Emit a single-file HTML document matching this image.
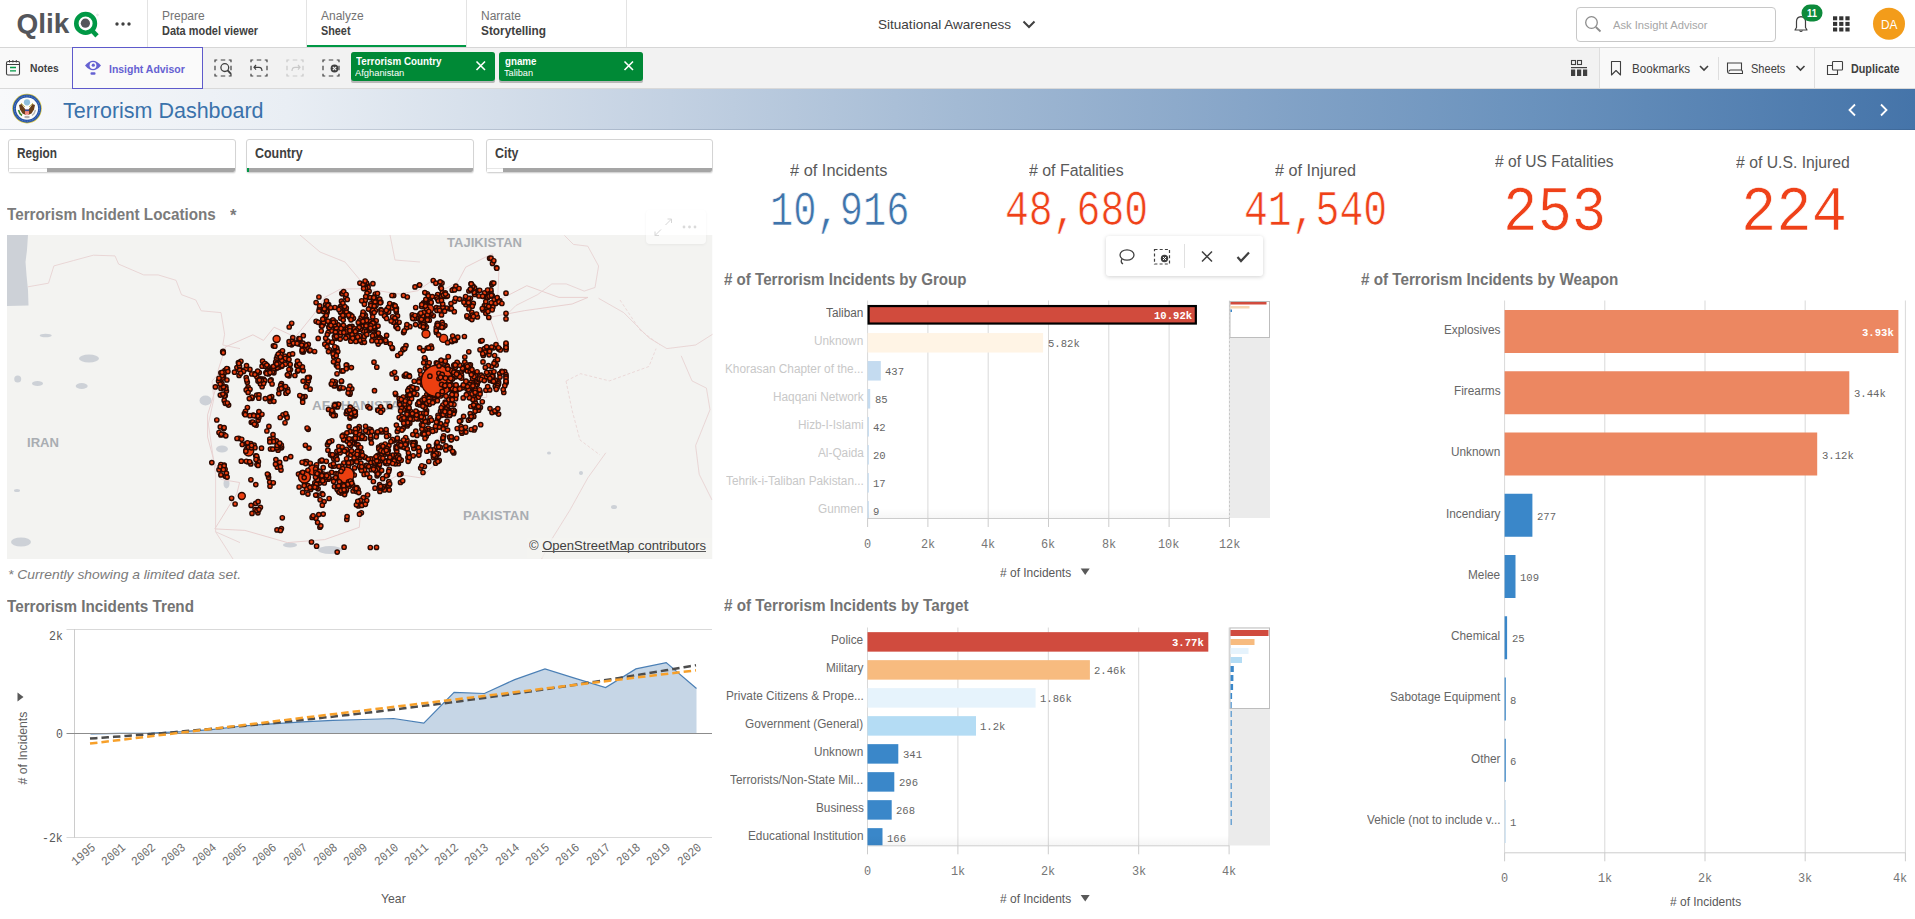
<!DOCTYPE html>
<html><head><meta charset="utf-8"><title>Terrorism Dashboard</title>
<style>
*{margin:0;padding:0;box-sizing:border-box}
html,body{width:1915px;height:919px;overflow:hidden;background:#fff;font-family:"Liberation Sans",sans-serif}
.a{position:absolute}
.t{position:absolute;white-space:pre}
svg{position:absolute;overflow:visible}
</style></head>
<body>
<div class="a" style="left:0;top:0;width:1915px;height:47px;background:#fff"></div>
<div class="a" style="left:0;top:47px;width:1915px;height:1px;background:#d6d6d6"></div>
<div class="t" style="left:16.50px;top:8.00px;font:normal bold 28px 'Liberation Sans', sans-serif;line-height:32.20px;color:#54565b;">Qlik</div>
<svg style="left:0;top:0" width="140" height="47">
<circle cx="85.6" cy="23.4" r="9.3" fill="none" stroke="#009845" stroke-width="4.6"/>
<circle cx="85.4" cy="23.2" r="4.6" fill="#54565b"/>
<path d="M91.5 30 L97 35.8" stroke="#009845" stroke-width="4.6" stroke-linecap="butt"/>
<circle cx="97.5" cy="15" r="0.9" fill="none" stroke="#bbb" stroke-width="0.4"/>
<circle cx="117" cy="24" r="1.7" fill="#404040"/><circle cx="123" cy="24" r="1.7" fill="#404040"/><circle cx="129" cy="24" r="1.7" fill="#404040"/>
</svg>
<div class="a" style="left:147px;top:0;width:1px;height:47px;background:#e3e3e3"></div>
<div class="a" style="left:306px;top:0;width:1px;height:47px;background:#e3e3e3"></div>
<div class="a" style="left:466px;top:0;width:1px;height:47px;background:#e3e3e3"></div>
<div class="a" style="left:626px;top:0;width:1px;height:47px;background:#e3e3e3"></div>
<div class="a" style="left:307px;top:45px;width:159px;height:2px;background:#009845"></div>
<div class="t" style="left:162.00px;top:9.60px;font:normal normal 12px 'Liberation Sans', sans-serif;line-height:13.80px;color:#737373;">Prepare</div>
<div class="t" style="left:162.00px;top:24.00px;font:normal bold 13px 'Liberation Sans', sans-serif;line-height:14.95px;color:#404040;transform:scaleX(0.8410);transform-origin:0 0;">Data model viewer</div>
<div class="t" style="left:321.00px;top:9.60px;font:normal normal 12px 'Liberation Sans', sans-serif;line-height:13.80px;color:#737373;">Analyze</div>
<div class="t" style="left:321.00px;top:24.00px;font:normal bold 13px 'Liberation Sans', sans-serif;line-height:14.95px;color:#404040;transform:scaleX(0.8332);transform-origin:0 0;">Sheet</div>
<div class="t" style="left:481.00px;top:9.60px;font:normal normal 12px 'Liberation Sans', sans-serif;line-height:13.80px;color:#737373;">Narrate</div>
<div class="t" style="left:481.00px;top:24.00px;font:normal bold 13px 'Liberation Sans', sans-serif;line-height:14.95px;color:#404040;transform:scaleX(0.9089);transform-origin:0 0;">Storytelling</div>
<div class="t" style="left:877.50px;top:16.80px;font:normal normal 13.4px 'Liberation Sans', sans-serif;line-height:15.41px;color:#404040;transform:scaleX(1.0113);transform-origin:0 0;">Situational Awareness</div>
<svg style="left:0;top:0" width="1915" height="47"><path d="M1023.5 21.5 L1029 27 L1034.5 21.5" fill="none" stroke="#404040" stroke-width="2"/></svg>
<div class="a" style="left:1576px;top:7px;width:200px;height:35px;border:1px solid #c8c8c8;border-radius:4px;background:#fff"></div>
<svg style="left:0;top:0" width="1915" height="47">
<circle cx="1591.5" cy="22.5" r="5.8" fill="none" stroke="#8c8c8c" stroke-width="1.3"/>
<path d="M1595.8 27 L1600.5 31.5" stroke="#8c8c8c" stroke-width="1.8"/>
</svg>
<div class="t" style="left:1613.00px;top:18.80px;font:normal normal 11.8px 'Liberation Sans', sans-serif;line-height:13.57px;color:#a6a6a6;transform:scaleX(0.9481);transform-origin:0 0;">Ask Insight Advisor</div>
<svg style="left:0;top:0" width="1915" height="47">
<path d="M1795 30 L1807 30 L1805.5 27.5 L1805.5 21.5 Q1805.5 17 1801 16.6 Q1796.5 17 1796.5 21.5 L1796.5 27.5 Z" fill="none" stroke="#404040" stroke-width="1.2" stroke-linejoin="round"/>
<path d="M1799.5 30.5 Q1801 32.5 1802.5 30.5" fill="none" stroke="#404040" stroke-width="1.2"/>
<rect x="1801.5" y="4.6" width="21" height="17" rx="8.5" fill="#0d8a3b"/>
</svg>
<div class="t" style="left:1807.00px;top:7.30px;font:normal bold 11px 'Liberation Sans', sans-serif;line-height:12.65px;color:#fff;transform:scaleX(0.8591);transform-origin:0 0;">11</div>
<svg style="left:0;top:0" width="1915" height="47"><rect x="1833.0" y="16.3" width="4.2" height="4" fill="#333"/><rect x="1839.2" y="16.3" width="4.2" height="4" fill="#333"/><rect x="1845.4" y="16.3" width="4.2" height="4" fill="#333"/><rect x="1833.0" y="21.9" width="4.2" height="4" fill="#333"/><rect x="1839.2" y="21.9" width="4.2" height="4" fill="#333"/><rect x="1845.4" y="21.9" width="4.2" height="4" fill="#333"/><rect x="1833.0" y="27.5" width="4.2" height="4" fill="#333"/><rect x="1839.2" y="27.5" width="4.2" height="4" fill="#333"/><rect x="1845.4" y="27.5" width="4.2" height="4" fill="#333"/><circle cx="1889" cy="23.8" r="16" fill="#f39c1a"/></svg>
<div class="t" style="left:1880.75px;top:17.60px;font:normal normal 13px 'Liberation Sans', sans-serif;line-height:14.95px;color:#fff;transform:scaleX(0.9135);transform-origin:0 0;">DA</div>
<div class="a" style="left:0;top:48px;width:1915px;height:40px;background:#f2f2f2"></div>
<div class="a" style="left:1600px;top:48px;width:315px;height:40px;background:#f9f9f9"></div>
<div class="a" style="left:0;top:88px;width:1915px;height:1px;background:#d9d9d9"></div>
<div class="a" style="left:1599px;top:48px;width:1px;height:40px;background:#dedede"></div>
<div class="a" style="left:1814px;top:48px;width:1px;height:40px;background:#dedede"></div>
<div class="a" style="left:1718px;top:57px;width:1px;height:23px;background:#dedede"></div>
<div class="a" style="left:0;top:48px;width:72px;height:40px;background:#f9f9f9"></div>
<svg style="left:0;top:0" width="400" height="90">
<rect x="6.5" y="61.5" width="13" height="13.5" rx="1.5" fill="none" stroke="#404040" stroke-width="1.1"/>
<path d="M6.5 64.5 H19.5" stroke="#404040" stroke-width="1"/>
<path d="M9.5 60 V62.5 M12.9 60 V62.5 M16.3 60 V62.5" stroke="#404040" stroke-width="1"/>
<path d="M10 67.5 H16 M10 70.8 H16" stroke="#009845" stroke-width="1.3"/>
</svg>
<div class="t" style="left:29.80px;top:61.90px;font:normal bold 11.4px 'Liberation Sans', sans-serif;line-height:13.11px;color:#404040;transform:scaleX(0.9066);transform-origin:0 0;">Notes</div>
<div class="a" style="left:71.5px;top:47px;width:131px;height:42px;border:1.5px solid #5e5acb;background:#fafafa"></div>
<svg style="left:0;top:0" width="400" height="90">
<path d="M85 65.5 Q93 56 101 65.5 Q93 75 85 65.5 Z" fill="#6561d2"/>
<circle cx="93" cy="65.5" r="3.4" fill="#fafafa"/><circle cx="93.3" cy="65.2" r="1.6" fill="#6561d2"/>
<rect x="90.5" y="72.3" width="5" height="2.5" rx="1" fill="#6561d2"/>
</svg>
<div class="t" style="left:109.10px;top:62.50px;font:normal bold 11.5px 'Liberation Sans', sans-serif;line-height:13.22px;color:#6561d2;transform:scaleX(0.9102);transform-origin:0 0;">Insight Advisor</div>
<svg style="left:0;top:0" width="400" height="90">
<g fill="none" stroke="#404040" stroke-width="1.2" stroke-dasharray="4.5 3.5" stroke-dashoffset="2.25">
<rect x="215" y="60" width="16" height="16"/>
<rect x="251" y="60" width="16" height="16"/>
<rect x="287" y="60" width="16" height="16" stroke="#c9c9c9"/>
<rect x="323" y="60" width="16" height="16"/>
</g>
<circle cx="224.8" cy="67.6" r="3.9" fill="none" stroke="#404040" stroke-width="1.3"/><path d="M227.6 70.4 L231 73.8" stroke="#404040" stroke-width="1.9"/>
<path d="M256 65 L254 67.3 L256 69.6 M254.2 67.3 H259 Q262 67.3 262 71" fill="none" stroke="#404040" stroke-width="1.2"/>
<path d="M298 65 L300 67.3 L298 69.6 M299.8 67.3 H295 Q292 67.3 292 71" fill="none" stroke="#c9c9c9" stroke-width="1.2"/>
<circle cx="334.5" cy="68.5" r="3.9" fill="#404040"/><path d="M332.8 66.8 L336.2 70.2 M336.2 66.8 L332.8 70.2" stroke="#f2f2f2" stroke-width="1.1"/>
</svg>
<div class="a" style="left:351px;top:52px;width:144px;height:31px;border-radius:3px 3px 2px 2px;background:#b8b8b8"></div>
<div class="a" style="left:351px;top:52px;width:144px;height:29px;border-radius:3px;background:#008936"></div>
<svg style="left:0;top:0" width="700" height="90"><path d="M476.5 61.5 L485 70 M485 61.5 L476.5 70" stroke="#fff" stroke-width="1.6"/></svg>
<div class="a" style="left:499px;top:52px;width:144px;height:31px;border-radius:3px 3px 2px 2px;background:#b8b8b8"></div>
<div class="a" style="left:499px;top:52px;width:144px;height:29px;border-radius:3px;background:#008936"></div>
<svg style="left:0;top:0" width="700" height="90"><path d="M624.5 61.5 L633 70 M633 61.5 L624.5 70" stroke="#fff" stroke-width="1.6"/></svg>
<div class="t" style="left:356.30px;top:56.10px;font:normal bold 10px 'Liberation Sans', sans-serif;line-height:11.50px;color:#fff;transform:scaleX(0.9832);transform-origin:0 0;">Terrorism Country</div>
<div class="t" style="left:355.40px;top:67.60px;font:normal normal 9.2px 'Liberation Sans', sans-serif;line-height:10.58px;color:#fff;transform:scaleX(1.0158);transform-origin:0 0;">Afghanistan</div>
<div class="t" style="left:504.50px;top:56.10px;font:normal bold 10px 'Liberation Sans', sans-serif;line-height:11.50px;color:#fff;transform:scaleX(0.9772);transform-origin:0 0;">gname</div>
<div class="t" style="left:503.60px;top:67.60px;font:normal normal 9.2px 'Liberation Sans', sans-serif;line-height:10.58px;color:#fff;transform:scaleX(0.9957);transform-origin:0 0;">Taliban</div>
<svg style="left:0;top:0" width="1915" height="90">
<g fill="none" stroke="#404040" stroke-width="1.1">
<rect x="1571.5" y="60.5" width="4" height="4"/><rect x="1577.5" y="60.5" width="4" height="4"/>
</g>
<rect x="1571" y="67" width="16" height="1.2" fill="#404040"/>
<rect x="1571" y="69.5" width="4.2" height="6.5" fill="#404040"/><rect x="1577" y="69.5" width="4.2" height="6.5" fill="#404040"/><rect x="1583" y="69.5" width="4.2" height="6.5" fill="#404040"/>
<path d="M1611.5 61.5 H1620.5 V75 L1616 70.5 L1611.5 75 Z" fill="none" stroke="#404040" stroke-width="1.1" stroke-linejoin="round"/>
<path d="M1700 66 L1704 70 L1708 66" fill="none" stroke="#404040" stroke-width="1.6"/>
<path d="M1727.5 71 V63 H1741.5 V70 M1727.5 71 Q1727.5 73.5 1730 73.5 H1742.5 Q1743 71 1741.5 70 H1730.5 Q1729 70 1729 71.5" fill="none" stroke="#404040" stroke-width="1.1"/>
<path d="M1796.5 66 L1800.5 70 L1804.5 66" fill="none" stroke="#404040" stroke-width="1.6"/>
<rect x="1832.5" y="61.5" width="10" height="8.5" rx="0.8" fill="none" stroke="#404040" stroke-width="1.1"/>
<path d="M1832.5 65.5 H1827.5 V74.5 H1837.5 V70" fill="none" stroke="#404040" stroke-width="1.1"/>
</svg>
<div class="t" style="left:1632.00px;top:62.20px;font:normal normal 12.8px 'Liberation Sans', sans-serif;line-height:14.72px;color:#404040;transform:scaleX(0.9060);transform-origin:0 0;">Bookmarks</div>
<div class="t" style="left:1751.40px;top:62.20px;font:normal normal 12.8px 'Liberation Sans', sans-serif;line-height:14.72px;color:#404040;transform:scaleX(0.8634);transform-origin:0 0;">Sheets</div>
<div class="t" style="left:1851.40px;top:62.20px;font:normal bold 12.8px 'Liberation Sans', sans-serif;line-height:14.72px;color:#404040;transform:scaleX(0.8419);transform-origin:0 0;">Duplicate</div>
<div class="a" style="left:0;top:89px;width:1915px;height:41px;background:linear-gradient(90deg,#f8f9fb 0%,#e9eef4 15%,#c3d1e2 35%,#a3bad4 50%,#86a5c8 65%,#6a92bd 80%,#4574a9 100%)"></div>
<div class="a" style="left:0;top:129px;width:1915px;height:1px;background:rgba(30,50,80,0.16)"></div>
<svg style="left:0;top:0" width="100" height="135">
<circle cx="27" cy="108.6" r="14.8" fill="#d8c648"/>
<circle cx="27" cy="108.6" r="14.1" fill="#2352a6"/>
<circle cx="27" cy="108.6" r="12.6" fill="none" stroke="#8aa4d6" stroke-width="0.7" stroke-dasharray="0.9 0.8"/>
<circle cx="27" cy="108.6" r="11.1" fill="#fdfdfb"/>
<circle cx="27" cy="102.3" r="3.1" fill="#8fc0dc"/>
<path d="M25.8 110 L21.5 104 L19 105 L20 109.5 L22.5 113.5 L25.8 115 Z" fill="#6a3f1a"/>
<path d="M28.2 110 L32.5 104 L35 105 L34 109.5 L31.5 113.5 L28.2 115 Z" fill="#6a3f1a"/>
<path d="M21 103 L25 107 M33 103 L29 107" stroke="#c9c060" stroke-width="1"/>
<circle cx="27" cy="107.5" r="1.3" fill="#fff"/>
<rect x="25" y="109.5" width="4" height="5.2" fill="#f08a80"/>
<rect x="25" y="109.5" width="4" height="1.6" fill="#2d4f9c"/>
<path d="M18.5 110 Q19.5 114 22 115.5" fill="none" stroke="#3f8a2c" stroke-width="1.6"/>
<path d="M35.5 110 Q34.5 114 32 115.5" fill="none" stroke="#b5b5b5" stroke-width="1.4"/>
<ellipse cx="27" cy="117" rx="2.8" ry="1.3" fill="#b0b0b0"/>
</svg>
<div class="t" style="left:62.70px;top:97.70px;font:normal normal 22px 'Liberation Sans', sans-serif;line-height:25.30px;color:#3a72ab;transform:scaleX(0.9761);transform-origin:0 0;">Terrorism Dashboard</div>
<svg style="left:0;top:0" width="1915" height="135">
<path d="M1855 104.5 L1849.5 110 L1855 115.5" fill="none" stroke="#fff" stroke-width="1.8"/>
<path d="M1881 104.5 L1886.5 110 L1881 115.5" fill="none" stroke="#fff" stroke-width="1.8"/>
</svg>
<div class="a" style="left:7.5px;top:139px;width:228.0px;height:34px;border:1px solid #d4d4d4;border-radius:3px;background:#fff;box-shadow:0 1px 1px rgba(0,0,0,0.06)"></div>
<div class="a" style="left:8.5px;top:168px;width:226.0px;height:4px;background:#a5a5a5;border-radius:0 0 2px 2px"></div>
<div class="a" style="left:8.5px;top:168px;width:38px;height:4px;background:#fff;border-top:1px solid #e6e6e6"></div>
<div class="t" style="left:16.50px;top:146.00px;font:normal bold 13.8px 'Liberation Sans', sans-serif;line-height:15.87px;color:#404040;transform:scaleX(0.8553);transform-origin:0 0;">Region</div>
<div class="a" style="left:246px;top:139px;width:228px;height:34px;border:1px solid #d4d4d4;border-radius:3px;background:#fff;box-shadow:0 1px 1px rgba(0,0,0,0.06)"></div>
<div class="a" style="left:247px;top:168px;width:226px;height:4px;background:#a5a5a5;border-radius:0 0 2px 2px"></div>
<div class="a" style="left:247px;top:168px;width:2px;height:4px;background:#009845"></div>
<div class="t" style="left:255.00px;top:146.00px;font:normal bold 13.8px 'Liberation Sans', sans-serif;line-height:15.87px;color:#404040;transform:scaleX(0.9019);transform-origin:0 0;">Country</div>
<div class="a" style="left:485.5px;top:139px;width:227.0px;height:34px;border:1px solid #d4d4d4;border-radius:3px;background:#fff;box-shadow:0 1px 1px rgba(0,0,0,0.06)"></div>
<div class="a" style="left:486.5px;top:168px;width:225.0px;height:4px;background:#a5a5a5;border-radius:0 0 2px 2px"></div>
<div class="a" style="left:486.5px;top:168px;width:16px;height:4px;background:#fff;border-top:1px solid #e6e6e6"></div>
<div class="t" style="left:494.50px;top:146.00px;font:normal bold 13.8px 'Liberation Sans', sans-serif;line-height:15.87px;color:#404040;transform:scaleX(0.8973);transform-origin:0 0;">City</div>
<div class="t" style="left:7.20px;top:204.80px;font:normal bold 17px 'Liberation Sans', sans-serif;line-height:19.55px;color:#7b7b7b;transform:scaleX(0.8961);transform-origin:0 0;">Terrorism Incident Locations</div>
<div class="t" style="left:230.40px;top:206.00px;font:normal bold 17px 'Liberation Sans', sans-serif;line-height:19.55px;color:#7b7b7b;transform:scaleX(0.9811);transform-origin:0 0;">*</div>
<div class="t" style="left:7.50px;top:568.40px;font:italic normal 13px 'Liberation Sans', sans-serif;line-height:14.95px;color:#7b7b7b;transform:scaleX(1.0677);transform-origin:0 0;">* Currently showing a limited data set.</div>
<div class="t" style="left:7.00px;top:596.70px;font:normal bold 16.5px 'Liberation Sans', sans-serif;line-height:18.97px;color:#737373;transform:scaleX(0.9242);transform-origin:0 0;">Terrorism Incidents Trend</div>
<div class="t" style="left:790.40px;top:161.00px;font:normal normal 16.7px 'Liberation Sans', sans-serif;line-height:19.20px;color:#595959;transform:scaleX(0.9812);transform-origin:0 0;"># of Incidents</div>
<div class="t" style="left:769.92px;top:185.00px;font:normal normal 48.484848484848484px 'Liberation Mono', monospace;line-height:55.76px;color:#3f74ab;transform:scaleX(0.7985);transform-origin:0 0;-webkit-text-stroke:0.7px #fff;">10,916</div>
<div class="t" style="left:1029.20px;top:161.10px;font:normal normal 16.7px 'Liberation Sans', sans-serif;line-height:19.20px;color:#595959;transform:scaleX(0.9531);transform-origin:0 0;"># of Fatalities</div>
<div class="t" style="left:1005.40px;top:184.40px;font:normal normal 49.39393939393939px 'Liberation Mono', monospace;line-height:56.80px;color:#ef4119;transform:scaleX(0.8055);transform-origin:0 0;-webkit-text-stroke:0.7px #fff;">48,680</div>
<div class="t" style="left:1275.05px;top:161.10px;font:normal normal 16.7px 'Liberation Sans', sans-serif;line-height:19.20px;color:#595959;transform:scaleX(0.9689);transform-origin:0 0;"># of Injured</div>
<div class="t" style="left:1244.40px;top:184.40px;font:normal normal 49.39393939393939px 'Liberation Mono', monospace;line-height:56.80px;color:#ef4119;transform:scaleX(0.8055);transform-origin:0 0;-webkit-text-stroke:0.7px #fff;">41,540</div>
<div class="t" style="left:1494.70px;top:151.80px;font:normal normal 16.7px 'Liberation Sans', sans-serif;line-height:19.20px;color:#595959;transform:scaleX(0.9333);transform-origin:0 0;"># of US Fatalities</div>
<div class="t" style="left:1502.84px;top:176.90px;font:normal normal 63.63636363636363px 'Liberation Mono', monospace;line-height:73.18px;color:#ef4119;transform:scaleX(0.9019);transform-origin:0 0;-webkit-text-stroke:0.7px #fff;">253</div>
<div class="t" style="left:1736.10px;top:152.60px;font:normal normal 16.7px 'Liberation Sans', sans-serif;line-height:19.20px;color:#595959;transform:scaleX(0.9437);transform-origin:0 0;"># of U.S. Injured</div>
<div class="t" style="left:1740.52px;top:176.90px;font:normal normal 63.63636363636363px 'Liberation Mono', monospace;line-height:73.18px;color:#ef4119;transform:scaleX(0.9251);transform-origin:0 0;-webkit-text-stroke:0.7px #fff;">224</div>
<div class="a" style="left:1106px;top:236px;width:157px;height:40px;background:#fff;border-radius:3px;box-shadow:0 1px 4px rgba(0,0,0,0.18)"></div>
<div class="a" style="left:1184px;top:244px;width:1px;height:24px;background:#e0e0e0"></div>
<svg style="left:0;top:0" width="1915" height="919">
<ellipse cx="1127" cy="255" rx="7" ry="5.2" fill="none" stroke="#404040" stroke-width="1.3"/>
<path d="M1122 259 Q1120 262 1123 264" fill="none" stroke="#404040" stroke-width="1.3"/>
<rect x="1154.5" y="249.5" width="15" height="14.5" fill="none" stroke="#404040" stroke-width="1.2" stroke-dasharray="3 2.2"/>
<circle cx="1164.5" cy="258.5" r="3.7" fill="#404040"/><path d="M1163 257 L1166 260 M1166 257 L1163 260" stroke="#fff" stroke-width="1"/>
<path d="M1202 251.5 L1212 261.5 M1212 251.5 L1202 261.5" stroke="#404040" stroke-width="1.5"/>
<path d="M1237.5 257 L1241 261 L1249 252.5" fill="none" stroke="#404040" stroke-width="2.2"/>
</svg>
<svg style="left:0;top:0" width="720" height="919"><line x1="66.5" y1="629.5" x2="712" y2="629.5" stroke="#d9d9d9" stroke-width="1"/><line x1="66.5" y1="837.5" x2="712" y2="837.5" stroke="#d9d9d9" stroke-width="1"/><line x1="74.5" y1="629" x2="74.5" y2="838" stroke="#cccccc" stroke-width="1"/><polygon points="90.5,733.3 90.5,733.8 120.8,733.3 151.1,733.0 181.4,731.7 211.7,729.7 242.0,726.0 272.3,723.9 302.6,721.8 332.9,720.3 363.2,719.5 393.5,718.5 423.8,723.2 454.1,692.3 484.4,693.5 514.7,679.6 545.0,668.9 575.3,678.4 605.6,687.6 635.9,668.9 666.2,662.6 696.5,688.5 696.5,733.3" fill="#c6d6e6"/><polyline points="90.5,733.8 120.8,733.3 151.1,733.0 181.4,731.7 211.7,729.7 242.0,726.0 272.3,723.9 302.6,721.8 332.9,720.3 363.2,719.5 393.5,718.5 423.8,723.2 454.1,692.3 484.4,693.5 514.7,679.6 545.0,668.9 575.3,678.4 605.6,687.6 635.9,668.9 666.2,662.6 696.5,688.5" fill="none" stroke="#4a7fb5" stroke-width="1.2"/><line x1="66.5" y1="733.5" x2="712" y2="733.5" stroke="#8c8c8c" stroke-width="1"/><polyline points="90.0,738.60 96.0,738.18 102.0,737.75 108.0,737.31 114.0,736.87 120.0,736.43 126.0,735.97 132.0,735.51 138.0,735.05 144.0,734.58 150.0,734.10 156.0,733.62 162.0,733.13 168.0,732.63 174.0,732.13 180.0,731.62 186.0,731.11 192.0,730.59 198.0,730.06 204.0,729.53 210.0,728.99 216.0,728.45 222.0,727.90 228.0,727.34 234.0,726.78 240.0,726.21 246.0,725.64 252.0,725.06 258.0,724.47 264.0,723.88 270.0,723.28 276.0,722.67 282.0,722.06 288.0,721.44 294.0,720.82 300.0,720.19 306.0,719.55 312.0,718.91 318.0,718.26 324.0,717.61 330.0,716.95 336.0,716.28 342.0,715.61 348.0,714.93 354.0,714.25 360.0,713.56 366.0,712.86 372.0,712.16 378.0,711.45 384.0,710.74 390.0,710.02 396.0,709.29 402.0,708.56 408.0,707.82 414.0,707.07 420.0,706.32 426.0,705.56 432.0,704.80 438.0,704.03 444.0,703.25 450.0,702.47 456.0,701.68 462.0,700.89 468.0,700.09 474.0,699.28 480.0,698.47 486.0,697.65 492.0,696.83 498.0,696.00 504.0,695.16 510.0,694.32 516.0,693.47 522.0,692.61 528.0,691.75 534.0,690.89 540.0,690.01 546.0,689.13 552.0,688.25 558.0,687.36 564.0,686.46 570.0,685.56 576.0,684.65 582.0,683.73 588.0,682.81 594.0,681.88 600.0,680.95 606.0,680.01 612.0,679.06 618.0,678.11 624.0,677.15 630.0,676.18 636.0,675.21 642.0,674.24 648.0,673.25 654.0,672.27 660.0,671.27 666.0,670.27 672.0,669.26 678.0,668.25 684.0,667.23 690.0,666.20 696.0,665.17" fill="none" stroke="#4d4d4d" stroke-width="2.5" stroke-dasharray="7.5 4"/><line x1="90" y1="743.6" x2="696" y2="670.3" stroke="#f7a02a" stroke-width="2.5" stroke-dasharray="7.5 4"/><path d="M17.5 692.5 L23.5 697 L17.5 701.5 Z" fill="#595959"/></svg>
<div class="t" style="left:48.69px;top:629.50px;font:normal normal 12.5px 'Liberation Mono', monospace;line-height:14.37px;color:#595959;transform:scaleX(0.9200);transform-origin:0 0;">2k</div>
<div class="t" style="left:55.59px;top:728.00px;font:normal normal 12.5px 'Liberation Mono', monospace;line-height:14.37px;color:#595959;transform:scaleX(0.9200);transform-origin:0 0;">0</div>
<div class="t" style="left:41.79px;top:832.00px;font:normal normal 12.5px 'Liberation Mono', monospace;line-height:14.37px;color:#595959;transform:scaleX(0.9200);transform-origin:0 0;">-2k</div>
<div class="t" style="left:57.5px;top:847.0px;width:52px;text-align:center;font:12.5px 'Liberation Mono',monospace;line-height:16px;color:#6e6e6e;transform:rotate(-40deg) scaleX(0.9);transform-origin:50% 50%">1995</div>
<div class="t" style="left:87.8px;top:847.0px;width:52px;text-align:center;font:12.5px 'Liberation Mono',monospace;line-height:16px;color:#6e6e6e;transform:rotate(-40deg) scaleX(0.9);transform-origin:50% 50%">2001</div>
<div class="t" style="left:118.1px;top:847.0px;width:52px;text-align:center;font:12.5px 'Liberation Mono',monospace;line-height:16px;color:#6e6e6e;transform:rotate(-40deg) scaleX(0.9);transform-origin:50% 50%">2002</div>
<div class="t" style="left:148.4px;top:847.0px;width:52px;text-align:center;font:12.5px 'Liberation Mono',monospace;line-height:16px;color:#6e6e6e;transform:rotate(-40deg) scaleX(0.9);transform-origin:50% 50%">2003</div>
<div class="t" style="left:178.7px;top:847.0px;width:52px;text-align:center;font:12.5px 'Liberation Mono',monospace;line-height:16px;color:#6e6e6e;transform:rotate(-40deg) scaleX(0.9);transform-origin:50% 50%">2004</div>
<div class="t" style="left:209.0px;top:847.0px;width:52px;text-align:center;font:12.5px 'Liberation Mono',monospace;line-height:16px;color:#6e6e6e;transform:rotate(-40deg) scaleX(0.9);transform-origin:50% 50%">2005</div>
<div class="t" style="left:239.3px;top:847.0px;width:52px;text-align:center;font:12.5px 'Liberation Mono',monospace;line-height:16px;color:#6e6e6e;transform:rotate(-40deg) scaleX(0.9);transform-origin:50% 50%">2006</div>
<div class="t" style="left:269.6px;top:847.0px;width:52px;text-align:center;font:12.5px 'Liberation Mono',monospace;line-height:16px;color:#6e6e6e;transform:rotate(-40deg) scaleX(0.9);transform-origin:50% 50%">2007</div>
<div class="t" style="left:299.9px;top:847.0px;width:52px;text-align:center;font:12.5px 'Liberation Mono',monospace;line-height:16px;color:#6e6e6e;transform:rotate(-40deg) scaleX(0.9);transform-origin:50% 50%">2008</div>
<div class="t" style="left:330.2px;top:847.0px;width:52px;text-align:center;font:12.5px 'Liberation Mono',monospace;line-height:16px;color:#6e6e6e;transform:rotate(-40deg) scaleX(0.9);transform-origin:50% 50%">2009</div>
<div class="t" style="left:360.5px;top:847.0px;width:52px;text-align:center;font:12.5px 'Liberation Mono',monospace;line-height:16px;color:#6e6e6e;transform:rotate(-40deg) scaleX(0.9);transform-origin:50% 50%">2010</div>
<div class="t" style="left:390.8px;top:847.0px;width:52px;text-align:center;font:12.5px 'Liberation Mono',monospace;line-height:16px;color:#6e6e6e;transform:rotate(-40deg) scaleX(0.9);transform-origin:50% 50%">2011</div>
<div class="t" style="left:421.1px;top:847.0px;width:52px;text-align:center;font:12.5px 'Liberation Mono',monospace;line-height:16px;color:#6e6e6e;transform:rotate(-40deg) scaleX(0.9);transform-origin:50% 50%">2012</div>
<div class="t" style="left:451.4px;top:847.0px;width:52px;text-align:center;font:12.5px 'Liberation Mono',monospace;line-height:16px;color:#6e6e6e;transform:rotate(-40deg) scaleX(0.9);transform-origin:50% 50%">2013</div>
<div class="t" style="left:481.7px;top:847.0px;width:52px;text-align:center;font:12.5px 'Liberation Mono',monospace;line-height:16px;color:#6e6e6e;transform:rotate(-40deg) scaleX(0.9);transform-origin:50% 50%">2014</div>
<div class="t" style="left:512.0px;top:847.0px;width:52px;text-align:center;font:12.5px 'Liberation Mono',monospace;line-height:16px;color:#6e6e6e;transform:rotate(-40deg) scaleX(0.9);transform-origin:50% 50%">2015</div>
<div class="t" style="left:542.3px;top:847.0px;width:52px;text-align:center;font:12.5px 'Liberation Mono',monospace;line-height:16px;color:#6e6e6e;transform:rotate(-40deg) scaleX(0.9);transform-origin:50% 50%">2016</div>
<div class="t" style="left:572.6px;top:847.0px;width:52px;text-align:center;font:12.5px 'Liberation Mono',monospace;line-height:16px;color:#6e6e6e;transform:rotate(-40deg) scaleX(0.9);transform-origin:50% 50%">2017</div>
<div class="t" style="left:602.9px;top:847.0px;width:52px;text-align:center;font:12.5px 'Liberation Mono',monospace;line-height:16px;color:#6e6e6e;transform:rotate(-40deg) scaleX(0.9);transform-origin:50% 50%">2018</div>
<div class="t" style="left:633.2px;top:847.0px;width:52px;text-align:center;font:12.5px 'Liberation Mono',monospace;line-height:16px;color:#6e6e6e;transform:rotate(-40deg) scaleX(0.9);transform-origin:50% 50%">2019</div>
<div class="t" style="left:663.5px;top:847.0px;width:52px;text-align:center;font:12.5px 'Liberation Mono',monospace;line-height:16px;color:#6e6e6e;transform:rotate(-40deg) scaleX(0.9);transform-origin:50% 50%">2020</div>
<div class="t" style="left:-27.5px;top:740px;width:100px;text-align:center;font:12px 'Liberation Sans',sans-serif;line-height:16px;color:#606060;transform:rotate(-90deg) scaleX(1.02);transform-origin:50% 50%"># of Incidents</div>
<div class="t" style="left:380.64px;top:891.00px;font:normal normal 13.3px 'Liberation Sans', sans-serif;line-height:15.29px;color:#595959;transform:scaleX(0.9200);transform-origin:0 0;">Year</div>
<div class="t" style="left:723.70px;top:269.70px;font:normal bold 16.3px 'Liberation Sans', sans-serif;line-height:18.75px;color:#737373;transform:scaleX(0.9289);transform-origin:0 0;"># of Terrorism Incidents by Group</div>
<svg style="left:0;top:0" width="1915" height="919"><line x1="867.6" y1="300.5" x2="867.6" y2="518" stroke="#d9d9d9" stroke-width="1"/><line x1="867.6" y1="518" x2="867.6" y2="527" stroke="#cccccc" stroke-width="1"/><line x1="927.9" y1="300.5" x2="927.9" y2="518" stroke="#d9d9d9" stroke-width="1"/><line x1="927.9" y1="518" x2="927.9" y2="527" stroke="#cccccc" stroke-width="1"/><line x1="988.2" y1="300.5" x2="988.2" y2="518" stroke="#d9d9d9" stroke-width="1"/><line x1="988.2" y1="518" x2="988.2" y2="527" stroke="#cccccc" stroke-width="1"/><line x1="1048.5" y1="300.5" x2="1048.5" y2="518" stroke="#d9d9d9" stroke-width="1"/><line x1="1048.5" y1="518" x2="1048.5" y2="527" stroke="#cccccc" stroke-width="1"/><line x1="1108.8" y1="300.5" x2="1108.8" y2="518" stroke="#d9d9d9" stroke-width="1"/><line x1="1108.8" y1="518" x2="1108.8" y2="527" stroke="#cccccc" stroke-width="1"/><line x1="1169.1" y1="300.5" x2="1169.1" y2="518" stroke="#d9d9d9" stroke-width="1"/><line x1="1169.1" y1="518" x2="1169.1" y2="527" stroke="#cccccc" stroke-width="1"/><line x1="1229.4" y1="300.5" x2="1229.4" y2="518" stroke="#d9d9d9" stroke-width="1"/><line x1="1229.4" y1="518" x2="1229.4" y2="527" stroke="#cccccc" stroke-width="1"/><line x1="867.6" y1="518.5" x2="1229.5" y2="518.5" stroke="#cccccc" stroke-width="1"/><rect x="868.6" y="306.05" width="327.238" height="17.5" fill="#d14b3d" stroke="#000" stroke-width="2.2"/><rect x="867.6" y="333.05" width="175.5" height="19.5" fill="#fff4e5"/><rect x="867.6" y="361.05" width="13.2" height="19.5" fill="#c4dbf0"/><rect x="867.6" y="389.05" width="2.6" height="19.5" fill="#c4dbf0"/><rect x="867.6" y="417.05" width="1.3" height="19.5" fill="#c4dbf0"/><rect x="867.6" y="445.05" width="1.2" height="19.5" fill="#c4dbf0"/><rect x="867.6" y="473.05" width="1.2" height="19.5" fill="#c4dbf0"/><rect x="867.6" y="501.05" width="1.2" height="16.9" fill="#c4dbf0"/><rect x="1229.5" y="301" width="40.5" height="217" fill="#ebebeb"/><rect x="1230" y="301.5" width="39.5" height="36" fill="#fff" stroke="#bdbdbd" stroke-width="1"/><rect x="1230.5" y="302" width="36" height="2.5" fill="#d14b3d"/><rect x="1230.5" y="306" width="19" height="2.5" fill="#f8d5b0"/><rect x="1230.5" y="309.5" width="1.5" height="2.5" fill="#3a87c9"/><line x1="1229.5" y1="301" x2="1229.5" y2="518" stroke="#c8c8c8" stroke-dasharray="2 2"/></svg>
<div class="t" style="left:826.19px;top:306.00px;font:normal normal 12.3px 'Liberation Sans', sans-serif;line-height:14.14px;color:#5f5f5f;transform:scaleX(0.9600);transform-origin:0 0;">Taliban</div>
<div class="t" style="left:1153.73px;top:308.80px;font:normal bold 11.5px 'Liberation Mono', monospace;line-height:13.22px;color:#ffffff;transform:scaleX(0.9200);transform-origin:0 0;">10.92k</div>
<div class="t" style="left:814.38px;top:334.00px;font:normal normal 12.3px 'Liberation Sans', sans-serif;line-height:14.14px;color:#c8c8c8;transform:scaleX(0.9600);transform-origin:0 0;">Unknown</div>
<div class="t" style="left:1047.57px;top:336.80px;font:normal normal 11.5px 'Liberation Mono', monospace;line-height:13.22px;color:#666666;transform:scaleX(0.9200);transform-origin:0 0;">5.82k</div>
<div class="t" style="left:725.12px;top:362.00px;font:normal normal 12.3px 'Liberation Sans', sans-serif;line-height:14.14px;color:#c8c8c8;transform:scaleX(0.9600);transform-origin:0 0;">Khorasan Chapter of the...</div>
<div class="t" style="left:885.28px;top:364.80px;font:normal normal 11.5px 'Liberation Mono', monospace;line-height:13.22px;color:#666666;transform:scaleX(0.9200);transform-origin:0 0;">437</div>
<div class="t" style="left:773.05px;top:390.00px;font:normal normal 12.3px 'Liberation Sans', sans-serif;line-height:14.14px;color:#c8c8c8;transform:scaleX(0.9600);transform-origin:0 0;">Haqqani Network</div>
<div class="t" style="left:874.66px;top:392.80px;font:normal normal 11.5px 'Liberation Mono', monospace;line-height:13.22px;color:#666666;transform:scaleX(0.9200);transform-origin:0 0;">85</div>
<div class="t" style="left:798.00px;top:418.00px;font:normal normal 12.3px 'Liberation Sans', sans-serif;line-height:14.14px;color:#c8c8c8;transform:scaleX(0.9600);transform-origin:0 0;">Hizb-I-Islami</div>
<div class="t" style="left:873.37px;top:420.80px;font:normal normal 11.5px 'Liberation Mono', monospace;line-height:13.22px;color:#666666;transform:scaleX(0.9200);transform-origin:0 0;">42</div>
<div class="t" style="left:817.67px;top:446.00px;font:normal normal 12.3px 'Liberation Sans', sans-serif;line-height:14.14px;color:#c8c8c8;transform:scaleX(0.9600);transform-origin:0 0;">Al-Qaida</div>
<div class="t" style="left:873.10px;top:448.80px;font:normal normal 11.5px 'Liberation Mono', monospace;line-height:13.22px;color:#666666;transform:scaleX(0.9200);transform-origin:0 0;">20</div>
<div class="t" style="left:725.81px;top:474.00px;font:normal normal 12.3px 'Liberation Sans', sans-serif;line-height:14.14px;color:#c8c8c8;transform:scaleX(0.9600);transform-origin:0 0;">Tehrik-i-Taliban Pakistan...</div>
<div class="t" style="left:873.10px;top:476.80px;font:normal normal 11.5px 'Liberation Mono', monospace;line-height:13.22px;color:#666666;transform:scaleX(0.9200);transform-origin:0 0;">17</div>
<div class="t" style="left:818.32px;top:502.00px;font:normal normal 12.3px 'Liberation Sans', sans-serif;line-height:14.14px;color:#c8c8c8;transform:scaleX(0.9600);transform-origin:0 0;">Gunmen</div>
<div class="t" style="left:873.10px;top:504.80px;font:normal normal 11.5px 'Liberation Mono', monospace;line-height:13.22px;color:#666666;transform:scaleX(0.9200);transform-origin:0 0;">9</div>
<div class="t" style="left:864.04px;top:537.40px;font:normal normal 13.2px 'Liberation Mono', monospace;line-height:15.18px;color:#767676;transform:scaleX(0.9000);transform-origin:0 0;">0</div>
<div class="t" style="left:920.78px;top:537.40px;font:normal normal 13.2px 'Liberation Mono', monospace;line-height:15.18px;color:#767676;transform:scaleX(0.9000);transform-origin:0 0;">2k</div>
<div class="t" style="left:981.08px;top:537.40px;font:normal normal 13.2px 'Liberation Mono', monospace;line-height:15.18px;color:#767676;transform:scaleX(0.9000);transform-origin:0 0;">4k</div>
<div class="t" style="left:1041.38px;top:537.40px;font:normal normal 13.2px 'Liberation Mono', monospace;line-height:15.18px;color:#767676;transform:scaleX(0.9000);transform-origin:0 0;">6k</div>
<div class="t" style="left:1101.68px;top:537.40px;font:normal normal 13.2px 'Liberation Mono', monospace;line-height:15.18px;color:#767676;transform:scaleX(0.9000);transform-origin:0 0;">8k</div>
<div class="t" style="left:1158.41px;top:537.40px;font:normal normal 13.2px 'Liberation Mono', monospace;line-height:15.18px;color:#767676;transform:scaleX(0.9000);transform-origin:0 0;">10k</div>
<div class="t" style="left:1218.71px;top:537.40px;font:normal normal 13.2px 'Liberation Mono', monospace;line-height:15.18px;color:#767676;transform:scaleX(0.9000);transform-origin:0 0;">12k</div>
<div class="t" style="left:1000.06px;top:565.50px;font:normal normal 13px 'Liberation Sans', sans-serif;line-height:14.95px;color:#595959;transform:scaleX(0.9200);transform-origin:0 0;"># of Incidents</div>
<svg style="left:0;top:0" width="1915" height="919"><path d="M1080.7 568.5 L1089.7 568.5 L1085.2 574.9 Z" fill="#595959"/></svg>
<div class="t" style="left:723.70px;top:596.20px;font:normal bold 16.3px 'Liberation Sans', sans-serif;line-height:18.75px;color:#737373;transform:scaleX(0.9373);transform-origin:0 0;"># of Terrorism Incidents by Target</div>
<svg style="left:0;top:0" width="1915" height="919"><line x1="867.5" y1="627.5" x2="867.5" y2="845.3" stroke="#d9d9d9" stroke-width="1"/><line x1="867.5" y1="845.3" x2="867.5" y2="854.3" stroke="#cccccc" stroke-width="1"/><line x1="957.9" y1="627.5" x2="957.9" y2="845.3" stroke="#d9d9d9" stroke-width="1"/><line x1="957.9" y1="845.3" x2="957.9" y2="854.3" stroke="#cccccc" stroke-width="1"/><line x1="1048.3" y1="627.5" x2="1048.3" y2="845.3" stroke="#d9d9d9" stroke-width="1"/><line x1="1048.3" y1="845.3" x2="1048.3" y2="854.3" stroke="#cccccc" stroke-width="1"/><line x1="1138.7" y1="627.5" x2="1138.7" y2="845.3" stroke="#d9d9d9" stroke-width="1"/><line x1="1138.7" y1="845.3" x2="1138.7" y2="854.3" stroke="#cccccc" stroke-width="1"/><line x1="1229.1" y1="627.5" x2="1229.1" y2="845.3" stroke="#d9d9d9" stroke-width="1"/><line x1="1229.1" y1="845.3" x2="1229.1" y2="854.3" stroke="#cccccc" stroke-width="1"/><line x1="867.5" y1="845.8" x2="1229.5" y2="845.8" stroke="#cccccc" stroke-width="1"/><rect x="867.5" y="632.15" width="340.8" height="19.5" fill="#d04b3e"/><rect x="867.5" y="660.15" width="222.4" height="19.5" fill="#f7bb7f"/><rect x="867.5" y="688.15" width="168.1" height="19.5" fill="#e6f3fc"/><rect x="867.5" y="716.15" width="108.5" height="19.5" fill="#b4dcf4"/><rect x="867.5" y="744.15" width="30.8" height="19.5" fill="#3a87c9"/><rect x="867.5" y="772.15" width="26.8" height="19.5" fill="#3a87c9"/><rect x="867.5" y="800.15" width="24.2" height="19.5" fill="#3a87c9"/><rect x="867.5" y="828.15" width="15.0" height="17.1" fill="#3a87c9"/><rect x="1229.5" y="627.5" width="40.5" height="218" fill="#ebebeb"/><rect x="1230" y="628" width="39.5" height="80.5" fill="#fff" stroke="#bdbdbd" stroke-width="1"/><rect x="1230.5" y="630.0" width="38" height="6" fill="#d04b3e"/><rect x="1230.5" y="639.0" width="24" height="6" fill="#f7bb7f"/><rect x="1230.5" y="648.0" width="18" height="6" fill="#e6f3fc"/><rect x="1230.5" y="657.0" width="11.5" height="6" fill="#b4dcf4"/><rect x="1230.5" y="666.0" width="3.3" height="6" fill="#3a87c9"/><rect x="1230.5" y="675.0" width="2.9" height="6" fill="#3a87c9"/><rect x="1230.5" y="684.0" width="2.6" height="6" fill="#3a87c9"/><rect x="1230.5" y="693.0" width="1.6" height="6" fill="#3a87c9"/><rect x="1230.5" y="702.0" width="1.5" height="6" fill="#3a87c9" opacity="0.7"/><rect x="1230.5" y="711.0" width="1.5" height="6" fill="#3a87c9" opacity="0.7"/><rect x="1230.5" y="720.0" width="1.5" height="6" fill="#3a87c9" opacity="0.7"/><rect x="1230.5" y="729.0" width="1.5" height="6" fill="#3a87c9" opacity="0.7"/><rect x="1230.5" y="738.0" width="1.5" height="6" fill="#3a87c9" opacity="0.7"/><rect x="1230.5" y="747.0" width="1.5" height="6" fill="#3a87c9" opacity="0.7"/><rect x="1230.5" y="756.0" width="1.5" height="6" fill="#3a87c9" opacity="0.7"/><rect x="1230.5" y="765.0" width="1.5" height="6" fill="#3a87c9" opacity="0.7"/><rect x="1230.5" y="774.0" width="1.5" height="6" fill="#3a87c9" opacity="0.7"/><rect x="1230.5" y="783.0" width="1.5" height="6" fill="#3a87c9" opacity="0.7"/><rect x="1230.5" y="792.0" width="1.5" height="6" fill="#3a87c9" opacity="0.7"/><rect x="1230.5" y="801.0" width="1.5" height="6" fill="#3a87c9" opacity="0.7"/><rect x="1230.5" y="810.0" width="1.5" height="6" fill="#3a87c9" opacity="0.7"/><rect x="1230.5" y="819.0" width="1.5" height="6" fill="#3a87c9" opacity="0.7"/></svg>
<div class="t" style="left:831.34px;top:633.40px;font:normal normal 12.3px 'Liberation Sans', sans-serif;line-height:14.14px;color:#666666;transform:scaleX(0.9600);transform-origin:0 0;">Police</div>
<div class="t" style="left:1171.55px;top:635.90px;font:normal bold 11.5px 'Liberation Mono', monospace;line-height:13.22px;color:#ffffff;transform:scaleX(0.9200);transform-origin:0 0;">3.77k</div>
<div class="t" style="left:826.11px;top:661.40px;font:normal normal 12.3px 'Liberation Sans', sans-serif;line-height:14.14px;color:#666666;transform:scaleX(0.9600);transform-origin:0 0;">Military</div>
<div class="t" style="left:1094.38px;top:663.90px;font:normal normal 11.5px 'Liberation Mono', monospace;line-height:13.22px;color:#666666;transform:scaleX(0.9200);transform-origin:0 0;">2.46k</div>
<div class="t" style="left:725.71px;top:689.40px;font:normal normal 12.3px 'Liberation Sans', sans-serif;line-height:14.14px;color:#666666;transform:scaleX(0.9600);transform-origin:0 0;">Private Citizens &amp; Prope...</div>
<div class="t" style="left:1040.14px;top:691.90px;font:normal normal 11.5px 'Liberation Mono', monospace;line-height:13.22px;color:#666666;transform:scaleX(0.9200);transform-origin:0 0;">1.86k</div>
<div class="t" style="left:745.39px;top:717.40px;font:normal normal 12.3px 'Liberation Sans', sans-serif;line-height:14.14px;color:#666666;transform:scaleX(0.9600);transform-origin:0 0;">Government (General)</div>
<div class="t" style="left:980.48px;top:719.90px;font:normal normal 11.5px 'Liberation Mono', monospace;line-height:13.22px;color:#666666;transform:scaleX(0.9200);transform-origin:0 0;">1.2k</div>
<div class="t" style="left:814.28px;top:745.40px;font:normal normal 12.3px 'Liberation Sans', sans-serif;line-height:14.14px;color:#666666;transform:scaleX(0.9600);transform-origin:0 0;">Unknown</div>
<div class="t" style="left:902.83px;top:747.90px;font:normal normal 11.5px 'Liberation Mono', monospace;line-height:13.22px;color:#666666;transform:scaleX(0.9200);transform-origin:0 0;">341</div>
<div class="t" style="left:730.33px;top:773.40px;font:normal normal 12.3px 'Liberation Sans', sans-serif;line-height:14.14px;color:#666666;transform:scaleX(0.9600);transform-origin:0 0;">Terrorists/Non-State Mil...</div>
<div class="t" style="left:898.76px;top:775.90px;font:normal normal 11.5px 'Liberation Mono', monospace;line-height:13.22px;color:#666666;transform:scaleX(0.9200);transform-origin:0 0;">296</div>
<div class="t" style="left:815.59px;top:801.40px;font:normal normal 12.3px 'Liberation Sans', sans-serif;line-height:14.14px;color:#666666;transform:scaleX(0.9600);transform-origin:0 0;">Business</div>
<div class="t" style="left:896.23px;top:803.90px;font:normal normal 11.5px 'Liberation Mono', monospace;line-height:13.22px;color:#666666;transform:scaleX(0.9200);transform-origin:0 0;">268</div>
<div class="t" style="left:747.99px;top:829.40px;font:normal normal 12.3px 'Liberation Sans', sans-serif;line-height:14.14px;color:#666666;transform:scaleX(0.9600);transform-origin:0 0;">Educational Institution</div>
<div class="t" style="left:887.01px;top:831.90px;font:normal normal 11.5px 'Liberation Mono', monospace;line-height:13.22px;color:#666666;transform:scaleX(0.9200);transform-origin:0 0;">166</div>
<div class="t" style="left:863.94px;top:863.50px;font:normal normal 13.2px 'Liberation Mono', monospace;line-height:15.18px;color:#767676;transform:scaleX(0.9000);transform-origin:0 0;">0</div>
<div class="t" style="left:950.78px;top:863.50px;font:normal normal 13.2px 'Liberation Mono', monospace;line-height:15.18px;color:#767676;transform:scaleX(0.9000);transform-origin:0 0;">1k</div>
<div class="t" style="left:1041.18px;top:863.50px;font:normal normal 13.2px 'Liberation Mono', monospace;line-height:15.18px;color:#767676;transform:scaleX(0.9000);transform-origin:0 0;">2k</div>
<div class="t" style="left:1131.58px;top:863.50px;font:normal normal 13.2px 'Liberation Mono', monospace;line-height:15.18px;color:#767676;transform:scaleX(0.9000);transform-origin:0 0;">3k</div>
<div class="t" style="left:1221.98px;top:863.50px;font:normal normal 13.2px 'Liberation Mono', monospace;line-height:15.18px;color:#767676;transform:scaleX(0.9000);transform-origin:0 0;">4k</div>
<div class="t" style="left:1000.06px;top:892.00px;font:normal normal 13px 'Liberation Sans', sans-serif;line-height:14.95px;color:#595959;transform:scaleX(0.9200);transform-origin:0 0;"># of Incidents</div>
<svg style="left:0;top:0" width="1915" height="919"><path d="M1080.7 895 L1089.7 895 L1085.2 901.4 Z" fill="#595959"/></svg>
<div class="t" style="left:1360.70px;top:269.90px;font:normal bold 16.3px 'Liberation Sans', sans-serif;line-height:18.75px;color:#737373;transform:scaleX(0.9345);transform-origin:0 0;"># of Terrorism Incidents by Weapon</div>
<svg style="left:0;top:0" width="1915" height="919"><line x1="1504.6" y1="300.5" x2="1504.6" y2="852.3" stroke="#d9d9d9" stroke-width="1"/><line x1="1504.6" y1="852.3" x2="1504.6" y2="861.3" stroke="#cccccc" stroke-width="1"/><line x1="1604.8" y1="300.5" x2="1604.8" y2="852.3" stroke="#d9d9d9" stroke-width="1"/><line x1="1604.8" y1="852.3" x2="1604.8" y2="861.3" stroke="#cccccc" stroke-width="1"/><line x1="1705.0" y1="300.5" x2="1705.0" y2="852.3" stroke="#d9d9d9" stroke-width="1"/><line x1="1705.0" y1="852.3" x2="1705.0" y2="861.3" stroke="#cccccc" stroke-width="1"/><line x1="1805.2" y1="300.5" x2="1805.2" y2="852.3" stroke="#d9d9d9" stroke-width="1"/><line x1="1805.2" y1="852.3" x2="1805.2" y2="861.3" stroke="#cccccc" stroke-width="1"/><line x1="1905.4" y1="300.5" x2="1905.4" y2="852.3" stroke="#d9d9d9" stroke-width="1"/><line x1="1905.4" y1="852.3" x2="1905.4" y2="861.3" stroke="#cccccc" stroke-width="1"/><line x1="1504.6" y1="852.8" x2="1905.5" y2="852.8" stroke="#cccccc" stroke-width="1"/><rect x="1504.6" y="310.0" width="393.8" height="43.0" fill="#ec8761"/><rect x="1504.6" y="371.25" width="344.7" height="43.0" fill="#ec8761"/><rect x="1504.6" y="432.5" width="312.6" height="43.0" fill="#ec8761"/><rect x="1504.6" y="493.75" width="27.8" height="43.0" fill="#3a87c9"/><rect x="1504.6" y="555.0" width="10.9" height="43.0" fill="#3a87c9"/><rect x="1504.6" y="616.25" width="2.5" height="43.0" fill="#3a87c9"/><rect x="1504.6" y="677.5" width="1.2" height="43.0" fill="#3a87c9"/><rect x="1504.6" y="738.75" width="1.2" height="43.0" fill="#3a87c9"/><rect x="1504.6" y="800.0" width="1.2" height="43.0" fill="#c9dff0"/></svg>
<div class="t" style="left:1444.17px;top:322.80px;font:normal normal 12.3px 'Liberation Sans', sans-serif;line-height:14.14px;color:#666666;transform:scaleX(0.9600);transform-origin:0 0;">Explosives</div>
<div class="t" style="left:1861.63px;top:326.00px;font:normal bold 11.5px 'Liberation Mono', monospace;line-height:13.22px;color:#ffffff;transform:scaleX(0.9200);transform-origin:0 0;">3.93k</div>
<div class="t" style="left:1454.02px;top:384.05px;font:normal normal 12.3px 'Liberation Sans', sans-serif;line-height:14.14px;color:#666666;transform:scaleX(0.9600);transform-origin:0 0;">Firearms</div>
<div class="t" style="left:1853.79px;top:387.25px;font:normal normal 11.5px 'Liberation Mono', monospace;line-height:13.22px;color:#666666;transform:scaleX(0.9200);transform-origin:0 0;">3.44k</div>
<div class="t" style="left:1451.38px;top:445.30px;font:normal normal 12.3px 'Liberation Sans', sans-serif;line-height:14.14px;color:#666666;transform:scaleX(0.9600);transform-origin:0 0;">Unknown</div>
<div class="t" style="left:1821.72px;top:448.50px;font:normal normal 11.5px 'Liberation Mono', monospace;line-height:13.22px;color:#666666;transform:scaleX(0.9200);transform-origin:0 0;">3.12k</div>
<div class="t" style="left:1446.12px;top:506.55px;font:normal normal 12.3px 'Liberation Sans', sans-serif;line-height:14.14px;color:#666666;transform:scaleX(0.9600);transform-origin:0 0;">Incendiary</div>
<div class="t" style="left:1536.86px;top:509.75px;font:normal normal 11.5px 'Liberation Mono', monospace;line-height:13.22px;color:#666666;transform:scaleX(0.9200);transform-origin:0 0;">277</div>
<div class="t" style="left:1468.44px;top:567.80px;font:normal normal 12.3px 'Liberation Sans', sans-serif;line-height:14.14px;color:#666666;transform:scaleX(0.9600);transform-origin:0 0;">Melee</div>
<div class="t" style="left:1520.02px;top:571.00px;font:normal normal 11.5px 'Liberation Mono', monospace;line-height:13.22px;color:#666666;transform:scaleX(0.9200);transform-origin:0 0;">109</div>
<div class="t" style="left:1451.38px;top:629.05px;font:normal normal 12.3px 'Liberation Sans', sans-serif;line-height:14.14px;color:#666666;transform:scaleX(0.9600);transform-origin:0 0;">Chemical</div>
<div class="t" style="left:1511.61px;top:632.25px;font:normal normal 11.5px 'Liberation Mono', monospace;line-height:13.22px;color:#666666;transform:scaleX(0.9200);transform-origin:0 0;">25</div>
<div class="t" style="left:1390.33px;top:690.30px;font:normal normal 12.3px 'Liberation Sans', sans-serif;line-height:14.14px;color:#666666;transform:scaleX(0.9600);transform-origin:0 0;">Sabotage Equipment</div>
<div class="t" style="left:1510.10px;top:693.50px;font:normal normal 11.5px 'Liberation Mono', monospace;line-height:13.22px;color:#666666;transform:scaleX(0.9200);transform-origin:0 0;">8</div>
<div class="t" style="left:1471.06px;top:751.55px;font:normal normal 12.3px 'Liberation Sans', sans-serif;line-height:14.14px;color:#666666;transform:scaleX(0.9600);transform-origin:0 0;">Other</div>
<div class="t" style="left:1510.10px;top:754.75px;font:normal normal 11.5px 'Liberation Mono', monospace;line-height:13.22px;color:#666666;transform:scaleX(0.9200);transform-origin:0 0;">6</div>
<div class="t" style="left:1366.95px;top:812.80px;font:normal normal 12.3px 'Liberation Sans', sans-serif;line-height:14.14px;color:#666666;transform:scaleX(0.9600);transform-origin:0 0;">Vehicle (not to include v...</div>
<div class="t" style="left:1510.10px;top:816.00px;font:normal normal 11.5px 'Liberation Mono', monospace;line-height:13.22px;color:#666666;transform:scaleX(0.9200);transform-origin:0 0;">1</div>
<div class="t" style="left:1501.04px;top:871.00px;font:normal normal 13.2px 'Liberation Mono', monospace;line-height:15.18px;color:#767676;transform:scaleX(0.9000);transform-origin:0 0;">0</div>
<div class="t" style="left:1597.68px;top:871.00px;font:normal normal 13.2px 'Liberation Mono', monospace;line-height:15.18px;color:#767676;transform:scaleX(0.9000);transform-origin:0 0;">1k</div>
<div class="t" style="left:1697.88px;top:871.00px;font:normal normal 13.2px 'Liberation Mono', monospace;line-height:15.18px;color:#767676;transform:scaleX(0.9000);transform-origin:0 0;">2k</div>
<div class="t" style="left:1798.08px;top:871.00px;font:normal normal 13.2px 'Liberation Mono', monospace;line-height:15.18px;color:#767676;transform:scaleX(0.9000);transform-origin:0 0;">3k</div>
<div class="t" style="left:1892.65px;top:871.00px;font:normal normal 13.2px 'Liberation Mono', monospace;line-height:15.18px;color:#767676;transform:scaleX(0.9000);transform-origin:0 0;">4k</div>
<div class="t" style="left:1670.43px;top:895.00px;font:normal normal 13px 'Liberation Sans', sans-serif;line-height:14.95px;color:#595959;transform:scaleX(0.9200);transform-origin:0 0;"># of Incidents</div>
<svg style="left:0;top:0" width="720" height="570"><defs><clipPath id="mc"><rect x="7" y="235" width="705.5" height="324"/></clipPath></defs><g clip-path="url(#mc)">
<rect x="7" y="235" width="705.5" height="324" fill="#f3f3f1"/>
<path d="M7 235 H28 L27 250 L25.5 262 L26.5 275 L28 290 L28.5 305.5 L7 306 Z" fill="#cdd1d7"/>
<ellipse cx="45.7" cy="335.5" rx="6" ry="1.8" fill="#cdd1d7"/>
<ellipse cx="89" cy="358.5" rx="10" ry="4" fill="#cdd1d7"/>
<ellipse cx="17.7" cy="379" rx="3.5" ry="3.5" fill="#cdd1d7"/>
<ellipse cx="37.5" cy="383.5" rx="5.5" ry="2.5" fill="#cdd1d7"/>
<ellipse cx="81.7" cy="386" rx="6" ry="3" fill="#cdd1d7"/>
<ellipse cx="205.5" cy="400.5" rx="6" ry="5" fill="#cdd1d7"/>
<ellipse cx="17" cy="490.5" rx="3" ry="1.5" fill="#cdd1d7"/>
<ellipse cx="21" cy="542" rx="10" ry="4.5" fill="#cdd1d7"/>
<ellipse cx="222" cy="449" rx="6" ry="3.5" fill="#cdd1d7"/>
<ellipse cx="226.5" cy="483.5" rx="3" ry="5" fill="#cdd1d7"/>
<ellipse cx="290" cy="545" rx="7" ry="2.5" fill="#cdd1d7"/>
<ellipse cx="330" cy="550" rx="12" ry="4" fill="#cdd1d7"/>
<ellipse cx="549" cy="453" rx="2" ry="1.5" fill="#cdd1d7"/>
<ellipse cx="581" cy="473" rx="2" ry="2" fill="#cdd1d7"/>
<ellipse cx="495" cy="370" rx="2" ry="2" fill="#cdd1d7"/>
<ellipse cx="614" cy="507" rx="3" ry="2" fill="#cdd1d7"/>
<ellipse cx="660" cy="562" rx="4" ry="2" fill="#cdd1d7"/>
<polygon points="225.5,346.9 252.9,334.8 263.5,340.4 274.1,327.2 295.4,337.1 314.0,314.0 324.7,297.4 340.6,289.0 365.6,288.7 399.2,294.0 417.8,290.7 429.7,282.3 441.7,290.7 457.7,282.3 465.7,267.2 492.3,253.7 498.9,270.6 497.6,300.7 526.8,285.7 558.8,297.4 588.0,297.4 572.1,304.0 524.2,310.7 489.6,317.3 500.2,346.9 497.6,360.0 484.3,379.4 486.9,397.2 457.7,400.4 457.7,408.4 447.0,421.1 439.1,437.0 437.7,462.2 420.4,477.8 399.2,474.7 375.2,487.2 361.9,496.5 359.3,527.3 324.7,539.6 287.4,542.6 244.9,530.4 214.8,528.9 236.9,493.4 239.6,482.5 220.9,479.4 214.3,462.2 207.6,437.0 207.6,414.8 215.6,389.1 218.3,369.7" fill="none" stroke="#e6cccc" stroke-width="0.9"/>
<path d="M28 286.8 L48.5 283.2 L53.9 265.9 L73.7 260.5 L93.4 255.2 L115 255.9 L118.6 264.1 L143.7 274.9 L158.1 274.9 L176 280.3 L181.5 294.7 L195.8 300 L201.2 310.8 L221 312.6 L224.6 334.2 L222.8 345 L240 348.6" fill="none" stroke="#e8d2d2" stroke-width="0.9"/>
<path d="M219 373.7 L212 381 L213.8 398.9 L208.4 424 L215.6 474.3 L215.6 531.8 L240 542.6 M215.6 531.8 L233.6 560" fill="none" stroke="#e8d2d2" stroke-width="0.9"/>
<path d="M300 235 L320 252 L345 262 L360 280" fill="none" stroke="#e8d2d2" stroke-width="0.9"/>
<path d="M390 235 L395 260 L420 262" fill="none" stroke="#e8d2d2" stroke-width="0.9"/>
<path d="M564.4 235.4 L573.4 244.4 L587.8 246.2 L598.6 266 L595 287.5 L584.2 291.1 L566.2 283.9 L551.9 283.9 L537.5 294.7 L515.9 305.5 L501.6 319.8" fill="none" stroke="#e8d2d2" stroke-width="0.9"/>
<path d="M605.8 452.8 L587.8 477.9 L569.8 510.3 L551.9 539 L541.1 560" fill="none" stroke="#e8d2d2" stroke-width="0.9"/>
<path d="M598.6 298.3 L623.7 312.6 L648.9 337.8 L666.8 348.6 L695.6 345 L713 334" fill="none" stroke="#e8d2d2" stroke-width="0.9"/>
<path d="M681.2 355.8 L692 380.9 L706.4 388.1 L710 409.7 L695.6 445.6 L699.2 474.3 L712 500" fill="none" stroke="#e8d2d2" stroke-width="0.9"/>
<path d="M566.2 380.9 L580.6 373.7 L609.4 380.9 L648.9 366.5 L656.1 348.6" fill="none" stroke="#e8d2d2" stroke-width="0.8" stroke-dasharray="3 2"/>
<path d="M566 381 L572 410 L580 440 L600 455" fill="none" stroke="#e8d2d2" stroke-width="0.8" stroke-dasharray="3 2"/>
<path d="M620 300 L640 330 L660 345" fill="none" stroke="#e8d2d2" stroke-width="0.8" stroke-dasharray="3 2"/>
<text x="447" y="247" font-family="Liberation Sans" font-weight="bold" font-size="12.5" fill="#a9adb2" textLength="75" lengthAdjust="spacingAndGlyphs">TAJIKISTAN</text>
<text x="27" y="447" font-family="Liberation Sans" font-weight="bold" font-size="12.5" fill="#a9adb2" textLength="32" lengthAdjust="spacingAndGlyphs">IRAN</text>
<text x="463" y="520" font-family="Liberation Sans" font-weight="bold" font-size="12.5" fill="#a9adb2" textLength="66" lengthAdjust="spacingAndGlyphs">PAKISTAN</text>
<text x="312" y="410" font-family="Liberation Sans" font-weight="bold" font-size="12.5" fill="#a9adb2" textLength="98" lengthAdjust="spacingAndGlyphs">AFGHANISTAN</text>
<g fill="#ec3f10" stroke="#2a0902" stroke-width="1.4">
<circle cx="266.7" cy="373.0" r="2.15"/>
<circle cx="415.7" cy="415.8" r="2.15"/>
<circle cx="415.0" cy="388.4" r="2.15"/>
<circle cx="473.7" cy="390.6" r="2.15"/>
<circle cx="467.3" cy="371.0" r="2.15"/>
<circle cx="282.9" cy="357.2" r="2.15"/>
<circle cx="467.3" cy="367.2" r="2.15"/>
<circle cx="327.2" cy="343.2" r="2.15"/>
<circle cx="416.9" cy="388.6" r="2.15"/>
<circle cx="240.9" cy="361.3" r="2.15"/>
<circle cx="473.8" cy="416.4" r="2.15"/>
<circle cx="409.9" cy="326.7" r="2.15"/>
<circle cx="356.6" cy="444.4" r="2.15"/>
<circle cx="430.0" cy="310.6" r="2.15"/>
<circle cx="321.6" cy="479.8" r="2.15"/>
<circle cx="350.8" cy="474.4" r="2.15"/>
<circle cx="454.3" cy="311.7" r="2.15"/>
<circle cx="340.2" cy="489.9" r="2.15"/>
<circle cx="474.4" cy="402.2" r="2.15"/>
<circle cx="256.7" cy="395.1" r="2.15"/>
<circle cx="463.2" cy="397.9" r="2.15"/>
<circle cx="437.7" cy="294.5" r="2.15"/>
<circle cx="419.7" cy="347.9" r="2.15"/>
<circle cx="404.8" cy="417.7" r="2.15"/>
<circle cx="421.4" cy="322.7" r="2.15"/>
<circle cx="435.2" cy="373.7" r="2.15"/>
<circle cx="357.6" cy="340.4" r="2.15"/>
<circle cx="299.6" cy="340.2" r="2.15"/>
<circle cx="438.5" cy="375.5" r="2.15"/>
<circle cx="431.1" cy="302.6" r="2.15"/>
<circle cx="339.6" cy="481.9" r="2.15"/>
<circle cx="445.2" cy="378.2" r="2.15"/>
<circle cx="382.7" cy="409.9" r="2.15"/>
<circle cx="259.3" cy="380.4" r="2.15"/>
<circle cx="423.1" cy="321.0" r="2.15"/>
<circle cx="375.0" cy="329.1" r="2.15"/>
<circle cx="434.9" cy="392.0" r="2.15"/>
<circle cx="248.1" cy="387.0" r="2.15"/>
<circle cx="455.4" cy="340.5" r="2.15"/>
<circle cx="328.0" cy="341.2" r="2.15"/>
<circle cx="349.3" cy="463.3" r="2.15"/>
<circle cx="360.2" cy="322.0" r="2.15"/>
<circle cx="499.6" cy="349.1" r="2.15"/>
<circle cx="492.9" cy="306.9" r="2.15"/>
<circle cx="455.7" cy="376.8" r="2.15"/>
<circle cx="314.8" cy="482.9" r="2.15"/>
<circle cx="360.3" cy="457.4" r="2.15"/>
<circle cx="370.1" cy="297.6" r="2.15"/>
<circle cx="407.8" cy="395.9" r="2.15"/>
<circle cx="362.8" cy="315.2" r="2.15"/>
<circle cx="443.6" cy="381.0" r="2.15"/>
<circle cx="376.5" cy="547.4" r="2.15"/>
<circle cx="478.4" cy="397.2" r="2.15"/>
<circle cx="367.1" cy="325.9" r="2.15"/>
<circle cx="345.5" cy="294.6" r="2.15"/>
<circle cx="360.5" cy="468.1" r="2.15"/>
<circle cx="301.6" cy="473.2" r="2.15"/>
<circle cx="341.5" cy="381.4" r="2.15"/>
<circle cx="396.0" cy="446.6" r="2.15"/>
<circle cx="455.6" cy="398.7" r="2.15"/>
<circle cx="504.7" cy="371.6" r="2.15"/>
<circle cx="419.4" cy="285.0" r="2.15"/>
<circle cx="428.2" cy="428.1" r="2.15"/>
<circle cx="370.9" cy="438.9" r="2.15"/>
<circle cx="474.1" cy="430.0" r="2.15"/>
<circle cx="372.3" cy="313.0" r="2.15"/>
<circle cx="444.5" cy="309.0" r="2.15"/>
<circle cx="450.3" cy="447.6" r="2.15"/>
<circle cx="370.9" cy="429.5" r="2.15"/>
<circle cx="428.3" cy="430.9" r="2.15"/>
<circle cx="344.7" cy="311.8" r="2.15"/>
<circle cx="367.5" cy="285.4" r="2.15"/>
<circle cx="321.6" cy="473.8" r="2.15"/>
<circle cx="446.4" cy="370.8" r="2.15"/>
<circle cx="435.2" cy="452.2" r="2.15"/>
<circle cx="454.4" cy="411.2" r="2.15"/>
<circle cx="381.4" cy="445.3" r="2.15"/>
<circle cx="423.5" cy="302.9" r="2.15"/>
<circle cx="292.8" cy="337.7" r="2.15"/>
<circle cx="413.2" cy="455.8" r="2.15"/>
<circle cx="318.1" cy="488.8" r="2.15"/>
<circle cx="403.4" cy="348.9" r="2.15"/>
<circle cx="350.7" cy="412.2" r="2.15"/>
<circle cx="250.8" cy="448.2" r="2.15"/>
<circle cx="477.4" cy="317.0" r="2.15"/>
<circle cx="398.4" cy="463.7" r="2.15"/>
<circle cx="453.6" cy="413.7" r="2.15"/>
<circle cx="388.9" cy="445.6" r="2.15"/>
<circle cx="374.8" cy="321.4" r="2.15"/>
<circle cx="354.4" cy="332.2" r="2.15"/>
<circle cx="356.2" cy="459.8" r="2.15"/>
<circle cx="419.6" cy="285.0" r="2.15"/>
<circle cx="409.2" cy="421.6" r="2.15"/>
<circle cx="256.9" cy="377.0" r="2.15"/>
<circle cx="350.8" cy="480.8" r="2.15"/>
<circle cx="385.1" cy="444.0" r="2.15"/>
<circle cx="425.4" cy="429.9" r="2.15"/>
<circle cx="489.1" cy="354.8" r="2.15"/>
<circle cx="215.4" cy="386.9" r="2.15"/>
<circle cx="411.3" cy="386.9" r="2.15"/>
<circle cx="250.8" cy="463.9" r="2.15"/>
<circle cx="335.9" cy="354.4" r="2.15"/>
<circle cx="346.3" cy="413.6" r="2.15"/>
<circle cx="406.0" cy="345.6" r="2.15"/>
<circle cx="443.6" cy="338.4" r="4"/>
<circle cx="368.6" cy="325.0" r="2.15"/>
<circle cx="441.0" cy="415.5" r="2.15"/>
<circle cx="446.2" cy="296.5" r="2.15"/>
<circle cx="353.4" cy="318.3" r="2.15"/>
<circle cx="470.8" cy="406.5" r="2.15"/>
<circle cx="247.5" cy="389.0" r="2.15"/>
<circle cx="225.1" cy="469.3" r="2.15"/>
<circle cx="438.0" cy="415.3" r="2.15"/>
<circle cx="255.8" cy="484.6" r="2.15"/>
<circle cx="484.5" cy="348.6" r="2.15"/>
<circle cx="249.9" cy="369.4" r="2.15"/>
<circle cx="335.3" cy="381.8" r="2.15"/>
<circle cx="425.9" cy="432.0" r="2.15"/>
<circle cx="437.0" cy="426.8" r="2.15"/>
<circle cx="495.4" cy="386.5" r="2.15"/>
<circle cx="382.9" cy="446.3" r="2.15"/>
<circle cx="242.3" cy="444.5" r="2.15"/>
<circle cx="468.5" cy="393.9" r="2.15"/>
<circle cx="339.8" cy="329.4" r="2.15"/>
<circle cx="433.3" cy="315.8" r="2.15"/>
<circle cx="450.9" cy="439.6" r="2.15"/>
<circle cx="475.0" cy="408.0" r="2.15"/>
<circle cx="415.8" cy="431.2" r="2.15"/>
<circle cx="410.3" cy="391.4" r="2.15"/>
<circle cx="386.2" cy="449.6" r="2.15"/>
<circle cx="396.0" cy="449.1" r="2.15"/>
<circle cx="491.0" cy="292.1" r="2.15"/>
<circle cx="381.4" cy="339.2" r="2.15"/>
<circle cx="341.7" cy="370.9" r="2.15"/>
<circle cx="450.2" cy="397.6" r="2.15"/>
<circle cx="371.3" cy="308.5" r="2.15"/>
<circle cx="347.0" cy="411.2" r="2.15"/>
<circle cx="235.1" cy="504.0" r="2.15"/>
<circle cx="270.6" cy="368.4" r="2.15"/>
<circle cx="259.0" cy="394.9" r="2.15"/>
<circle cx="425.1" cy="380.3" r="2.15"/>
<circle cx="389.2" cy="469.3" r="2.15"/>
<circle cx="354.8" cy="337.5" r="2.15"/>
<circle cx="485.8" cy="313.3" r="2.15"/>
<circle cx="444.1" cy="373.8" r="2.15"/>
<circle cx="360.9" cy="463.2" r="2.15"/>
<circle cx="370.3" cy="547.5" r="2.15"/>
<circle cx="276.5" cy="358.7" r="2.15"/>
<circle cx="477.2" cy="384.5" r="2.15"/>
<circle cx="403.7" cy="420.7" r="2.15"/>
<circle cx="434.1" cy="399.4" r="2.15"/>
<circle cx="403.7" cy="418.4" r="2.15"/>
<circle cx="427.3" cy="293.8" r="2.15"/>
<circle cx="322.1" cy="493.6" r="2.15"/>
<circle cx="373.9" cy="334.2" r="2.15"/>
<circle cx="341.0" cy="484.2" r="2.15"/>
<circle cx="331.4" cy="383.9" r="2.15"/>
<circle cx="246.2" cy="377.6" r="2.15"/>
<circle cx="317.9" cy="477.1" r="2.15"/>
<circle cx="414.7" cy="443.5" r="2.15"/>
<circle cx="356.2" cy="456.3" r="2.15"/>
<circle cx="392.5" cy="348.4" r="2.15"/>
<circle cx="494.2" cy="299.5" r="2.15"/>
<circle cx="407.0" cy="440.3" r="2.15"/>
<circle cx="355.3" cy="329.6" r="2.15"/>
<circle cx="335.0" cy="350.5" r="2.15"/>
<circle cx="401.0" cy="473.8" r="2.15"/>
<circle cx="364.1" cy="474.5" r="2.15"/>
<circle cx="275.7" cy="362.0" r="2.15"/>
<circle cx="302.4" cy="349.1" r="2.15"/>
<circle cx="436.6" cy="386.7" r="2.15"/>
<circle cx="316.6" cy="546.2" r="2.15"/>
<circle cx="340.7" cy="318.2" r="2.15"/>
<circle cx="417.5" cy="318.2" r="2.15"/>
<circle cx="318.6" cy="479.8" r="2.15"/>
<circle cx="273.1" cy="438.2" r="2.15"/>
<circle cx="349.2" cy="453.3" r="2.15"/>
<circle cx="327.2" cy="478.4" r="2.15"/>
<circle cx="420.2" cy="320.2" r="2.15"/>
<circle cx="350.0" cy="418.1" r="2.15"/>
<circle cx="354.3" cy="475.0" r="2.15"/>
<circle cx="287.5" cy="374.8" r="2.15"/>
<circle cx="343.8" cy="463.0" r="2.15"/>
<circle cx="442.9" cy="426.3" r="2.15"/>
<circle cx="419.5" cy="314.5" r="2.15"/>
<circle cx="495.5" cy="386.1" r="2.15"/>
<circle cx="331.5" cy="330.9" r="2.15"/>
<circle cx="360.2" cy="340.7" r="2.15"/>
<circle cx="372.9" cy="283.7" r="2.15"/>
<circle cx="223.1" cy="351.3" r="2.15"/>
<circle cx="490.9" cy="296.0" r="2.15"/>
<circle cx="392.7" cy="316.8" r="2.15"/>
<circle cx="379.5" cy="461.3" r="2.15"/>
<circle cx="356.0" cy="335.2" r="2.15"/>
<circle cx="382.2" cy="454.5" r="2.15"/>
<circle cx="378.7" cy="447.1" r="2.15"/>
<circle cx="333.8" cy="356.9" r="2.15"/>
<circle cx="351.8" cy="388.8" r="2.15"/>
<circle cx="373.9" cy="323.3" r="2.15"/>
<circle cx="370.7" cy="437.7" r="2.15"/>
<circle cx="346.3" cy="308.2" r="2.15"/>
<circle cx="226.9" cy="380.0" r="2.15"/>
<circle cx="296.7" cy="365.4" r="2.15"/>
<circle cx="250.8" cy="443.7" r="2.15"/>
<circle cx="308.4" cy="378.6" r="2.15"/>
<circle cx="280.2" cy="352.5" r="2.15"/>
<circle cx="349.9" cy="386.1" r="2.15"/>
<circle cx="480.0" cy="391.7" r="2.15"/>
<circle cx="406.5" cy="327.7" r="2.15"/>
<circle cx="355.3" cy="411.7" r="2.15"/>
<circle cx="405.0" cy="404.4" r="2.15"/>
<circle cx="327.1" cy="312.5" r="2.15"/>
<circle cx="496.2" cy="380.8" r="2.15"/>
<circle cx="393.5" cy="304.9" r="2.15"/>
<circle cx="369.1" cy="291.3" r="2.15"/>
<circle cx="442.3" cy="292.8" r="2.15"/>
<circle cx="377.1" cy="475.8" r="2.15"/>
<circle cx="362.7" cy="435.8" r="2.15"/>
<circle cx="385.6" cy="463.2" r="2.15"/>
<circle cx="351.9" cy="336.2" r="2.15"/>
<circle cx="308.2" cy="429.3" r="2.15"/>
<circle cx="324.9" cy="317.4" r="2.15"/>
<circle cx="333.7" cy="458.8" r="2.15"/>
<circle cx="388.8" cy="481.6" r="2.15"/>
<circle cx="258.1" cy="420.2" r="2.15"/>
<circle cx="480.1" cy="394.1" r="2.15"/>
<circle cx="345.0" cy="332.7" r="2.15"/>
<circle cx="453.8" cy="289.1" r="2.15"/>
<circle cx="297.5" cy="371.1" r="2.15"/>
<circle cx="381.9" cy="431.9" r="2.15"/>
<circle cx="356.3" cy="457.2" r="2.15"/>
<circle cx="291.6" cy="344.8" r="2.15"/>
<circle cx="364.7" cy="469.9" r="2.15"/>
<circle cx="431.0" cy="314.0" r="2.15"/>
<circle cx="374.0" cy="362.2" r="2.15"/>
<circle cx="377.6" cy="455.5" r="2.15"/>
<circle cx="222.8" cy="372.7" r="2.15"/>
<circle cx="427.4" cy="317.3" r="2.15"/>
<circle cx="370.9" cy="458.9" r="2.15"/>
<circle cx="331.6" cy="413.7" r="2.15"/>
<circle cx="285.3" cy="364.2" r="2.15"/>
<circle cx="438.9" cy="394.8" r="2.15"/>
<circle cx="356.0" cy="338.0" r="2.15"/>
<circle cx="281.0" cy="470.1" r="2.15"/>
<circle cx="336.8" cy="349.3" r="2.15"/>
<circle cx="280.0" cy="388.5" r="2.15"/>
<circle cx="367.6" cy="495.0" r="2.15"/>
<circle cx="446.7" cy="308.1" r="2.15"/>
<circle cx="400.5" cy="482.4" r="2.15"/>
<circle cx="255.8" cy="455.9" r="2.15"/>
<circle cx="349.8" cy="394.2" r="2.15"/>
<circle cx="375.3" cy="294.0" r="2.15"/>
<circle cx="478.9" cy="296.0" r="2.15"/>
<circle cx="323.5" cy="311.6" r="2.15"/>
<circle cx="353.1" cy="491.0" r="2.15"/>
<circle cx="247.4" cy="407.5" r="2.15"/>
<circle cx="489.6" cy="258.3" r="2.15"/>
<circle cx="436.5" cy="444.0" r="2.15"/>
<circle cx="297.5" cy="361.2" r="2.15"/>
<circle cx="426.6" cy="410.7" r="2.15"/>
<circle cx="339.5" cy="388.6" r="2.15"/>
<circle cx="437.2" cy="460.5" r="2.15"/>
<circle cx="322.0" cy="460.9" r="2.15"/>
<circle cx="408.7" cy="393.1" r="2.15"/>
<circle cx="506.0" cy="347.2" r="2.15"/>
<circle cx="400.6" cy="429.4" r="2.15"/>
<circle cx="470.4" cy="364.8" r="2.15"/>
<circle cx="224.2" cy="465.0" r="2.15"/>
<circle cx="427.2" cy="372.8" r="2.15"/>
<circle cx="335.9" cy="325.5" r="2.15"/>
<circle cx="420.3" cy="318.0" r="2.15"/>
<circle cx="377.2" cy="456.2" r="2.15"/>
<circle cx="474.6" cy="287.9" r="2.15"/>
<circle cx="455.5" cy="367.3" r="2.15"/>
<circle cx="422.5" cy="381.5" r="2.15"/>
<circle cx="347.0" cy="451.5" r="2.15"/>
<circle cx="338.7" cy="487.4" r="2.15"/>
<circle cx="286.9" cy="416.4" r="2.15"/>
<circle cx="225.8" cy="386.9" r="2.15"/>
<circle cx="473.0" cy="384.5" r="5"/>
<circle cx="289.4" cy="344.2" r="2.15"/>
<circle cx="419.6" cy="450.3" r="2.15"/>
<circle cx="334.4" cy="336.6" r="2.15"/>
<circle cx="446.5" cy="415.3" r="2.15"/>
<circle cx="396.0" cy="326.7" r="2.15"/>
<circle cx="368.1" cy="287.2" r="2.15"/>
<circle cx="445.7" cy="382.0" r="2.15"/>
<circle cx="337.6" cy="406.9" r="2.15"/>
<circle cx="440.2" cy="385.9" r="2.15"/>
<circle cx="369.2" cy="429.2" r="2.15"/>
<circle cx="426.7" cy="404.3" r="2.15"/>
<circle cx="430.4" cy="301.2" r="2.15"/>
<circle cx="464.7" cy="366.5" r="2.15"/>
<circle cx="396.8" cy="451.4" r="2.15"/>
<circle cx="433.7" cy="401.4" r="2.15"/>
<circle cx="338.8" cy="446.5" r="2.15"/>
<circle cx="294.9" cy="375.5" r="2.15"/>
<circle cx="373.4" cy="481.5" r="2.15"/>
<circle cx="277.5" cy="362.5" r="2.15"/>
<circle cx="425.4" cy="368.3" r="2.15"/>
<circle cx="251.1" cy="505.4" r="2.15"/>
<circle cx="278.9" cy="448.1" r="2.15"/>
<circle cx="300.3" cy="341.7" r="2.15"/>
<circle cx="380.4" cy="453.4" r="2.15"/>
<circle cx="278.8" cy="444.4" r="2.15"/>
<circle cx="468.6" cy="303.2" r="2.15"/>
<circle cx="457.2" cy="428.5" r="2.15"/>
<circle cx="246.3" cy="443.7" r="2.15"/>
<circle cx="347.2" cy="439.6" r="2.15"/>
<circle cx="281.5" cy="383.6" r="2.15"/>
<circle cx="378.8" cy="459.8" r="2.15"/>
<circle cx="470.4" cy="298.3" r="2.15"/>
<circle cx="388.3" cy="450.3" r="2.15"/>
<circle cx="426.9" cy="312.1" r="2.15"/>
<circle cx="397.7" cy="355.5" r="2.15"/>
<circle cx="483.5" cy="352.9" r="2.15"/>
<circle cx="425.1" cy="397.3" r="2.15"/>
<circle cx="397.5" cy="315.9" r="2.15"/>
<circle cx="431.1" cy="346.0" r="2.15"/>
<circle cx="410.5" cy="411.3" r="2.15"/>
<circle cx="362.0" cy="342.3" r="2.15"/>
<circle cx="420.0" cy="370.5" r="2.15"/>
<circle cx="498.6" cy="382.2" r="2.15"/>
<circle cx="361.9" cy="326.4" r="2.15"/>
<circle cx="474.8" cy="374.2" r="2.15"/>
<circle cx="321.5" cy="325.7" r="2.15"/>
<circle cx="418.9" cy="416.3" r="2.15"/>
<circle cx="270.0" cy="401.3" r="2.15"/>
<circle cx="279.7" cy="462.4" r="2.15"/>
<circle cx="427.8" cy="318.9" r="2.15"/>
<circle cx="318.9" cy="297.0" r="2.15"/>
<circle cx="258.9" cy="417.6" r="2.15"/>
<circle cx="486.7" cy="346.9" r="2.15"/>
<circle cx="339.2" cy="451.2" r="2.15"/>
<circle cx="426.3" cy="436.3" r="2.15"/>
<circle cx="474.7" cy="294.5" r="2.15"/>
<circle cx="332.7" cy="466.2" r="2.15"/>
<circle cx="376.4" cy="303.1" r="2.15"/>
<circle cx="250.0" cy="389.3" r="2.15"/>
<circle cx="269.8" cy="372.0" r="2.15"/>
<circle cx="441.5" cy="382.3" r="2.15"/>
<circle cx="407.3" cy="297.0" r="2.15"/>
<circle cx="424.6" cy="316.4" r="2.15"/>
<circle cx="253.2" cy="415.0" r="2.15"/>
<circle cx="436.2" cy="307.6" r="2.15"/>
<circle cx="342.4" cy="303.4" r="2.15"/>
<circle cx="281.8" cy="366.3" r="2.15"/>
<circle cx="328.1" cy="332.5" r="2.15"/>
<circle cx="365.7" cy="324.1" r="2.15"/>
<circle cx="436.5" cy="455.6" r="2.15"/>
<circle cx="268.9" cy="426.4" r="2.15"/>
<circle cx="405.1" cy="447.8" r="2.15"/>
<circle cx="436.4" cy="297.2" r="2.15"/>
<circle cx="437.1" cy="365.6" r="2.15"/>
<circle cx="386.1" cy="462.4" r="2.15"/>
<circle cx="445.6" cy="380.7" r="2.15"/>
<circle cx="379.1" cy="473.1" r="2.15"/>
<circle cx="300.0" cy="343.5" r="2.15"/>
<circle cx="444.0" cy="383.2" r="2.15"/>
<circle cx="407.2" cy="412.2" r="2.15"/>
<circle cx="402.9" cy="349.8" r="2.15"/>
<circle cx="303.1" cy="370.7" r="2.15"/>
<circle cx="391.8" cy="308.0" r="2.15"/>
<circle cx="370.6" cy="435.7" r="2.15"/>
<circle cx="387.1" cy="309.1" r="2.15"/>
<circle cx="320.2" cy="471.6" r="2.15"/>
<circle cx="440.7" cy="287.6" r="2.15"/>
<circle cx="429.3" cy="320.2" r="2.15"/>
<circle cx="364.4" cy="342.3" r="2.15"/>
<circle cx="446.0" cy="374.8" r="2.15"/>
<circle cx="433.5" cy="457.6" r="2.15"/>
<circle cx="472.1" cy="396.6" r="2.15"/>
<circle cx="471.2" cy="429.5" r="2.15"/>
<circle cx="287.4" cy="359.4" r="2.15"/>
<circle cx="449.7" cy="415.4" r="2.15"/>
<circle cx="450.2" cy="308.9" r="2.15"/>
<circle cx="472.8" cy="285.8" r="2.15"/>
<circle cx="470.2" cy="413.6" r="2.15"/>
<circle cx="339.1" cy="336.7" r="2.15"/>
<circle cx="477.4" cy="409.9" r="2.15"/>
<circle cx="354.5" cy="438.7" r="2.15"/>
<circle cx="385.4" cy="316.2" r="2.15"/>
<circle cx="349.5" cy="478.4" r="2.15"/>
<circle cx="247.3" cy="448.7" r="2.15"/>
<circle cx="433.2" cy="280.5" r="2.15"/>
<circle cx="452.8" cy="385.6" r="2.15"/>
<circle cx="298.9" cy="338.7" r="2.15"/>
<circle cx="365.3" cy="457.4" r="2.15"/>
<circle cx="331.7" cy="472.4" r="2.15"/>
<circle cx="326.9" cy="310.3" r="2.15"/>
<circle cx="281.4" cy="528.6" r="2.15"/>
<circle cx="308.3" cy="344.4" r="2.15"/>
<circle cx="429.3" cy="377.4" r="2.15"/>
<circle cx="324.1" cy="501.6" r="2.15"/>
<circle cx="441.1" cy="364.0" r="2.15"/>
<circle cx="339.6" cy="331.0" r="2.15"/>
<circle cx="395.3" cy="463.8" r="2.15"/>
<circle cx="429.0" cy="314.9" r="2.15"/>
<circle cx="277.0" cy="529.9" r="2.15"/>
<circle cx="270.5" cy="449.0" r="2.15"/>
<circle cx="340.1" cy="307.6" r="2.15"/>
<circle cx="278.9" cy="367.2" r="2.15"/>
<circle cx="490.2" cy="380.5" r="2.15"/>
<circle cx="219.0" cy="469.8" r="2.15"/>
<circle cx="369.8" cy="308.3" r="2.15"/>
<circle cx="374.1" cy="302.3" r="2.15"/>
<circle cx="439.8" cy="381.7" r="2.15"/>
<circle cx="348.3" cy="453.9" r="2.15"/>
<circle cx="399.1" cy="322.3" r="2.15"/>
<circle cx="424.2" cy="432.1" r="2.15"/>
<circle cx="379.2" cy="463.9" r="2.15"/>
<circle cx="290.5" cy="369.6" r="2.15"/>
<circle cx="367.0" cy="293.1" r="2.15"/>
<circle cx="380.4" cy="461.2" r="2.15"/>
<circle cx="379.0" cy="466.1" r="2.15"/>
<circle cx="376.2" cy="320.8" r="2.15"/>
<circle cx="334.2" cy="406.8" r="2.15"/>
<circle cx="459.5" cy="299.1" r="2.15"/>
<circle cx="405.7" cy="375.1" r="2.15"/>
<circle cx="506.0" cy="381.7" r="2.15"/>
<circle cx="437.5" cy="299.0" r="2.15"/>
<circle cx="363.3" cy="331.1" r="2.15"/>
<circle cx="273.4" cy="345.8" r="2.15"/>
<circle cx="376.7" cy="471.5" r="2.15"/>
<circle cx="307.5" cy="377.6" r="2.15"/>
<circle cx="479.9" cy="407.5" r="2.15"/>
<circle cx="307.1" cy="428.0" r="2.15"/>
<circle cx="495.3" cy="380.2" r="2.15"/>
<circle cx="498.2" cy="301.2" r="2.15"/>
<circle cx="436.0" cy="391.3" r="2.15"/>
<circle cx="465.9" cy="432.1" r="2.15"/>
<circle cx="271.7" cy="396.5" r="2.15"/>
<circle cx="343.2" cy="435.0" r="2.15"/>
<circle cx="426.8" cy="305.7" r="2.15"/>
<circle cx="332.4" cy="454.8" r="2.15"/>
<circle cx="320.1" cy="499.8" r="2.15"/>
<circle cx="423.0" cy="472.5" r="2.15"/>
<circle cx="414.2" cy="381.3" r="2.15"/>
<circle cx="341.4" cy="381.0" r="2.15"/>
<circle cx="262.1" cy="386.7" r="2.15"/>
<circle cx="352.3" cy="461.8" r="2.15"/>
<circle cx="256.1" cy="425.2" r="2.15"/>
<circle cx="361.6" cy="435.1" r="2.15"/>
<circle cx="378.5" cy="461.9" r="2.15"/>
<circle cx="449.2" cy="411.8" r="2.15"/>
<circle cx="391.3" cy="459.5" r="2.15"/>
<circle cx="380.9" cy="309.7" r="2.15"/>
<circle cx="472.9" cy="384.2" r="2.15"/>
<circle cx="220.3" cy="426.9" r="2.15"/>
<circle cx="440.4" cy="447.4" r="2.15"/>
<circle cx="341.6" cy="472.6" r="2.15"/>
<circle cx="361.3" cy="437.6" r="2.15"/>
<circle cx="309.0" cy="448.1" r="2.15"/>
<circle cx="354.6" cy="415.9" r="2.15"/>
<circle cx="328.3" cy="479.2" r="2.15"/>
<circle cx="361.6" cy="452.3" r="2.15"/>
<circle cx="472.2" cy="371.8" r="2.15"/>
<circle cx="438.3" cy="381.7" r="2.15"/>
<circle cx="425.4" cy="406.4" r="2.15"/>
<circle cx="401.3" cy="446.7" r="2.15"/>
<circle cx="445.3" cy="292.8" r="2.15"/>
<circle cx="407.2" cy="448.9" r="2.15"/>
<circle cx="348.5" cy="389.3" r="2.15"/>
<circle cx="323.3" cy="324.3" r="2.15"/>
<circle cx="279.3" cy="389.6" r="2.15"/>
<circle cx="231.6" cy="498.3" r="2.15"/>
<circle cx="436.4" cy="447.4" r="2.15"/>
<circle cx="338.3" cy="325.4" r="2.15"/>
<circle cx="352.6" cy="443.3" r="2.15"/>
<circle cx="220.6" cy="380.1" r="2.15"/>
<circle cx="473.4" cy="396.6" r="2.15"/>
<circle cx="462.5" cy="370.3" r="2.15"/>
<circle cx="345.5" cy="485.3" r="2.15"/>
<circle cx="220.8" cy="435.0" r="2.15"/>
<circle cx="380.0" cy="341.6" r="2.15"/>
<circle cx="305.1" cy="396.5" r="2.15"/>
<circle cx="375.3" cy="305.6" r="2.15"/>
<circle cx="428.2" cy="422.2" r="2.15"/>
<circle cx="449.7" cy="375.7" r="2.15"/>
<circle cx="467.2" cy="316.9" r="2.15"/>
<circle cx="270.0" cy="486.2" r="2.15"/>
<circle cx="289.1" cy="341.6" r="2.15"/>
<circle cx="365.0" cy="287.2" r="2.15"/>
<circle cx="452.2" cy="290.2" r="2.15"/>
<circle cx="445.7" cy="377.7" r="2.15"/>
<circle cx="338.4" cy="490.9" r="2.15"/>
<circle cx="241.3" cy="461.2" r="2.15"/>
<circle cx="384.6" cy="339.6" r="2.15"/>
<circle cx="360.0" cy="340.2" r="2.15"/>
<circle cx="465.1" cy="298.9" r="2.15"/>
<circle cx="318.2" cy="338.4" r="2.15"/>
<circle cx="491.2" cy="372.8" r="2.15"/>
<circle cx="409.1" cy="459.0" r="2.15"/>
<circle cx="289.0" cy="375.8" r="2.15"/>
<circle cx="363.6" cy="338.7" r="2.15"/>
<circle cx="320.3" cy="461.0" r="2.15"/>
<circle cx="487.9" cy="295.0" r="2.15"/>
<circle cx="343.2" cy="320.1" r="2.15"/>
<circle cx="316.0" cy="518.3" r="2.15"/>
<circle cx="411.7" cy="416.8" r="2.15"/>
<circle cx="386.0" cy="342.2" r="2.15"/>
<circle cx="467.6" cy="300.2" r="2.15"/>
<circle cx="332.7" cy="320.0" r="2.15"/>
<circle cx="337.9" cy="404.3" r="2.15"/>
<circle cx="352.0" cy="472.3" r="2.15"/>
<circle cx="263.5" cy="379.1" r="2.15"/>
<circle cx="352.1" cy="326.4" r="2.15"/>
<circle cx="378.0" cy="456.3" r="2.15"/>
<circle cx="323.2" cy="514.1" r="2.15"/>
<circle cx="437.4" cy="400.7" r="2.15"/>
<circle cx="352.9" cy="328.4" r="2.15"/>
<circle cx="265.5" cy="364.5" r="2.15"/>
<circle cx="460.9" cy="372.8" r="2.15"/>
<circle cx="338.2" cy="360.5" r="2.15"/>
<circle cx="432.0" cy="429.8" r="2.15"/>
<circle cx="438.4" cy="383.1" r="2.15"/>
<circle cx="409.8" cy="393.9" r="2.15"/>
<circle cx="360.7" cy="329.1" r="2.15"/>
<circle cx="426.8" cy="394.6" r="2.15"/>
<circle cx="446.9" cy="365.6" r="2.15"/>
<circle cx="336.0" cy="473.7" r="2.15"/>
<circle cx="355.0" cy="415.1" r="2.15"/>
<circle cx="427.4" cy="421.1" r="2.15"/>
<circle cx="272.8" cy="449.1" r="2.15"/>
<circle cx="445.3" cy="361.2" r="2.15"/>
<circle cx="349.1" cy="486.2" r="2.15"/>
<circle cx="341.2" cy="484.3" r="2.15"/>
<circle cx="246.2" cy="389.9" r="2.15"/>
<circle cx="333.1" cy="320.0" r="2.15"/>
<circle cx="343.7" cy="439.8" r="2.15"/>
<circle cx="309.6" cy="350.8" r="2.15"/>
<circle cx="340.1" cy="483.3" r="2.15"/>
<circle cx="470.2" cy="318.2" r="2.15"/>
<circle cx="445.8" cy="450.0" r="2.15"/>
<circle cx="474.2" cy="390.9" r="2.15"/>
<circle cx="302.7" cy="399.1" r="2.15"/>
<circle cx="437.1" cy="394.9" r="2.15"/>
<circle cx="427.1" cy="403.0" r="2.15"/>
<circle cx="345.8" cy="327.8" r="2.15"/>
<circle cx="350.9" cy="455.0" r="2.15"/>
<circle cx="408.5" cy="389.7" r="2.15"/>
<circle cx="392.9" cy="455.2" r="2.15"/>
<circle cx="473.3" cy="303.4" r="2.15"/>
<circle cx="374.0" cy="297.2" r="2.15"/>
<circle cx="483.3" cy="355.4" r="2.15"/>
<circle cx="448.1" cy="380.4" r="2.15"/>
<circle cx="283.0" cy="414.9" r="2.15"/>
<circle cx="403.2" cy="397.0" r="2.15"/>
<circle cx="377.2" cy="458.8" r="2.15"/>
<circle cx="366.8" cy="323.7" r="2.15"/>
<circle cx="454.5" cy="393.0" r="2.15"/>
<circle cx="299.8" cy="338.8" r="2.15"/>
<circle cx="395.8" cy="321.0" r="2.15"/>
<circle cx="455.5" cy="390.6" r="2.15"/>
<circle cx="279.8" cy="446.9" r="2.15"/>
<circle cx="377.0" cy="471.9" r="2.15"/>
<circle cx="349.8" cy="443.7" r="2.15"/>
<circle cx="275.9" cy="459.6" r="2.15"/>
<circle cx="339.7" cy="492.2" r="2.15"/>
<circle cx="388.7" cy="435.5" r="2.15"/>
<circle cx="419.1" cy="401.7" r="2.15"/>
<circle cx="497.2" cy="297.7" r="2.15"/>
<circle cx="448.9" cy="385.1" r="2.15"/>
<circle cx="340.8" cy="472.1" r="2.15"/>
<circle cx="350.8" cy="445.5" r="2.15"/>
<circle cx="272.5" cy="370.0" r="2.15"/>
<circle cx="333.5" cy="479.1" r="2.15"/>
<circle cx="304.7" cy="483.2" r="2.15"/>
<circle cx="305.2" cy="461.7" r="2.15"/>
<circle cx="378.8" cy="299.2" r="2.15"/>
<circle cx="345.0" cy="436.3" r="2.15"/>
<circle cx="344.7" cy="306.5" r="2.15"/>
<circle cx="284.7" cy="356.1" r="2.15"/>
<circle cx="325.5" cy="304.7" r="2.15"/>
<circle cx="351.9" cy="439.4" r="2.15"/>
<circle cx="444.6" cy="379.4" r="2.15"/>
<circle cx="327.1" cy="476.3" r="2.15"/>
<circle cx="461.5" cy="375.2" r="2.15"/>
<circle cx="442.1" cy="322.4" r="2.15"/>
<circle cx="396.3" cy="455.4" r="2.15"/>
<circle cx="363.2" cy="314.2" r="2.15"/>
<circle cx="387.5" cy="475.1" r="2.15"/>
<circle cx="347.5" cy="329.2" r="2.15"/>
<circle cx="277.3" cy="467.2" r="2.15"/>
<circle cx="319.4" cy="308.8" r="2.15"/>
<circle cx="406.8" cy="420.9" r="2.15"/>
<circle cx="440.6" cy="423.6" r="2.15"/>
<circle cx="306.8" cy="461.7" r="2.15"/>
<circle cx="252.1" cy="398.3" r="2.15"/>
<circle cx="268.5" cy="373.9" r="2.15"/>
<circle cx="465.1" cy="366.9" r="2.15"/>
<circle cx="436.4" cy="332.4" r="2.15"/>
<circle cx="313.0" cy="470.0" r="5"/>
<circle cx="424.5" cy="358.2" r="2.15"/>
<circle cx="438.7" cy="334.9" r="2.15"/>
<circle cx="412.3" cy="314.8" r="2.15"/>
<circle cx="367.8" cy="465.6" r="2.15"/>
<circle cx="271.1" cy="379.8" r="2.15"/>
<circle cx="478.5" cy="290.6" r="2.15"/>
<circle cx="346.7" cy="336.5" r="2.15"/>
<circle cx="319.6" cy="483.1" r="2.15"/>
<circle cx="424.9" cy="405.1" r="2.15"/>
<circle cx="249.0" cy="446.4" r="2.15"/>
<circle cx="349.7" cy="326.7" r="2.15"/>
<circle cx="345.9" cy="490.9" r="2.15"/>
<circle cx="498.5" cy="383.9" r="2.15"/>
<circle cx="455.9" cy="286.1" r="2.15"/>
<circle cx="506.0" cy="374.7" r="2.15"/>
<circle cx="247.8" cy="461.8" r="2.15"/>
<circle cx="373.4" cy="298.8" r="2.15"/>
<circle cx="471.8" cy="312.3" r="2.15"/>
<circle cx="265.9" cy="372.6" r="2.15"/>
<circle cx="476.5" cy="381.7" r="2.15"/>
<circle cx="409.2" cy="388.4" r="2.15"/>
<circle cx="454.4" cy="373.5" r="2.15"/>
<circle cx="450.3" cy="369.9" r="2.15"/>
<circle cx="361.1" cy="455.6" r="2.15"/>
<circle cx="337.2" cy="552.1" r="2.15"/>
<circle cx="359.2" cy="426.7" r="2.15"/>
<circle cx="322.3" cy="505.2" r="2.15"/>
<circle cx="335.3" cy="415.4" r="2.15"/>
<circle cx="486.5" cy="296.7" r="2.15"/>
<circle cx="236.9" cy="367.6" r="2.15"/>
<circle cx="355.5" cy="333.5" r="2.15"/>
<circle cx="346.0" cy="470.4" r="2.15"/>
<circle cx="470.9" cy="386.0" r="2.15"/>
<circle cx="377.0" cy="338.6" r="2.15"/>
<circle cx="404.8" cy="348.6" r="2.15"/>
<circle cx="222.8" cy="434.3" r="2.15"/>
<circle cx="303.3" cy="352.0" r="2.15"/>
<circle cx="417.0" cy="435.4" r="2.15"/>
<circle cx="310.7" cy="489.4" r="2.15"/>
<circle cx="444.9" cy="325.6" r="2.15"/>
<circle cx="422.3" cy="433.9" r="2.15"/>
<circle cx="222.7" cy="351.9" r="2.15"/>
<circle cx="248.7" cy="451.0" r="5"/>
<circle cx="393.4" cy="441.0" r="2.15"/>
<circle cx="407.4" cy="424.0" r="2.15"/>
<circle cx="241.1" cy="370.2" r="2.15"/>
<circle cx="211.8" cy="462.6" r="2.15"/>
<circle cx="379.2" cy="457.5" r="2.15"/>
<circle cx="437.2" cy="327.4" r="2.15"/>
<circle cx="349.4" cy="317.0" r="2.15"/>
<circle cx="404.5" cy="421.8" r="2.15"/>
<circle cx="356.6" cy="491.4" r="2.15"/>
<circle cx="348.7" cy="313.8" r="2.15"/>
<circle cx="348.4" cy="334.2" r="2.15"/>
<circle cx="424.4" cy="466.5" r="2.15"/>
<circle cx="359.9" cy="430.7" r="2.15"/>
<circle cx="425.7" cy="374.9" r="2.15"/>
<circle cx="247.3" cy="382.3" r="2.15"/>
<circle cx="332.9" cy="323.4" r="2.15"/>
<circle cx="480.7" cy="341.1" r="2.15"/>
<circle cx="358.1" cy="444.9" r="2.15"/>
<circle cx="224.0" cy="434.5" r="2.15"/>
<circle cx="387.5" cy="449.4" r="2.15"/>
<circle cx="246.3" cy="461.3" r="2.15"/>
<circle cx="485.8" cy="377.0" r="2.15"/>
<circle cx="316.3" cy="487.5" r="2.15"/>
<circle cx="377.6" cy="474.1" r="2.15"/>
<circle cx="485.9" cy="390.2" r="2.15"/>
<circle cx="436.9" cy="310.4" r="2.15"/>
<circle cx="361.5" cy="470.4" r="2.15"/>
<circle cx="384.4" cy="454.2" r="2.15"/>
<circle cx="376.0" cy="305.2" r="2.15"/>
<circle cx="439.2" cy="460.4" r="2.15"/>
<circle cx="260.9" cy="378.8" r="2.15"/>
<circle cx="415.1" cy="442.4" r="2.15"/>
<circle cx="267.7" cy="368.9" r="2.15"/>
<circle cx="269.8" cy="439.2" r="2.15"/>
<circle cx="326.0" cy="479.2" r="2.15"/>
<circle cx="478.3" cy="409.6" r="2.15"/>
<circle cx="400.7" cy="353.3" r="2.15"/>
<circle cx="326.3" cy="461.3" r="2.15"/>
<circle cx="384.5" cy="315.8" r="2.15"/>
<circle cx="389.1" cy="455.3" r="2.15"/>
<circle cx="307.1" cy="347.6" r="2.15"/>
<circle cx="412.0" cy="442.6" r="2.15"/>
<circle cx="429.4" cy="404.3" r="2.15"/>
<circle cx="330.5" cy="454.7" r="2.15"/>
<circle cx="343.5" cy="486.9" r="2.15"/>
<circle cx="356.9" cy="487.5" r="2.15"/>
<circle cx="476.5" cy="314.0" r="2.15"/>
<circle cx="257.1" cy="458.0" r="2.15"/>
<circle cx="498.7" cy="348.9" r="2.15"/>
<circle cx="434.8" cy="391.7" r="2.15"/>
<circle cx="291.7" cy="323.3" r="2.15"/>
<circle cx="404.6" cy="421.9" r="2.15"/>
<circle cx="478.0" cy="381.8" r="2.15"/>
<circle cx="342.0" cy="293.5" r="2.15"/>
<circle cx="430.1" cy="417.8" r="2.15"/>
<circle cx="476.4" cy="408.2" r="2.15"/>
<circle cx="364.6" cy="301.8" r="2.15"/>
<circle cx="443.0" cy="440.9" r="2.15"/>
<circle cx="452.1" cy="341.6" r="2.15"/>
<circle cx="350.3" cy="431.6" r="2.15"/>
<circle cx="406.9" cy="324.6" r="2.15"/>
<circle cx="448.7" cy="399.7" r="2.15"/>
<circle cx="445.2" cy="382.1" r="2.15"/>
<circle cx="313.1" cy="486.6" r="2.15"/>
<circle cx="506.0" cy="383.1" r="2.15"/>
<circle cx="267.9" cy="366.3" r="2.15"/>
<circle cx="370.9" cy="462.6" r="2.15"/>
<circle cx="404.3" cy="375.8" r="2.15"/>
<circle cx="281.4" cy="447.8" r="2.15"/>
<circle cx="421.5" cy="424.8" r="2.15"/>
<circle cx="397.5" cy="440.0" r="2.15"/>
<circle cx="419.2" cy="379.9" r="2.15"/>
<circle cx="273.9" cy="401.3" r="2.15"/>
<circle cx="330.7" cy="465.3" r="2.15"/>
<circle cx="442.4" cy="309.3" r="2.15"/>
<circle cx="484.6" cy="352.6" r="2.15"/>
<circle cx="326.5" cy="301.0" r="2.15"/>
<circle cx="262.6" cy="361.2" r="2.15"/>
<circle cx="471.6" cy="417.1" r="2.15"/>
<circle cx="379.6" cy="337.4" r="2.15"/>
<circle cx="472.3" cy="315.1" r="2.15"/>
<circle cx="468.9" cy="291.0" r="2.15"/>
<circle cx="362.5" cy="318.3" r="2.15"/>
<circle cx="424.9" cy="314.7" r="2.15"/>
<circle cx="420.7" cy="468.1" r="2.15"/>
<circle cx="423.5" cy="380.6" r="2.15"/>
<circle cx="376.7" cy="433.8" r="2.15"/>
<circle cx="506.0" cy="376.7" r="2.15"/>
<circle cx="225.3" cy="395.5" r="2.15"/>
<circle cx="422.1" cy="318.0" r="2.15"/>
<circle cx="492.4" cy="381.1" r="2.15"/>
<circle cx="390.3" cy="343.8" r="2.15"/>
<circle cx="412.1" cy="391.7" r="2.15"/>
<circle cx="407.3" cy="425.9" r="2.15"/>
<circle cx="316.6" cy="484.2" r="2.15"/>
<circle cx="469.3" cy="304.0" r="2.15"/>
<circle cx="403.6" cy="332.6" r="2.15"/>
<circle cx="490.0" cy="372.4" r="2.15"/>
<circle cx="323.4" cy="474.0" r="2.15"/>
<circle cx="329.8" cy="323.7" r="2.15"/>
<circle cx="445.1" cy="402.1" r="2.15"/>
<circle cx="443.1" cy="377.9" r="2.15"/>
<circle cx="352.6" cy="409.6" r="2.15"/>
<circle cx="344.7" cy="486.9" r="2.15"/>
<circle cx="506.0" cy="348.2" r="2.15"/>
<circle cx="450.0" cy="388.9" r="2.15"/>
<circle cx="481.2" cy="375.0" r="2.15"/>
<circle cx="481.0" cy="375.8" r="2.15"/>
<circle cx="365.3" cy="300.3" r="2.15"/>
<circle cx="364.0" cy="315.6" r="2.15"/>
<circle cx="393.7" cy="295.5" r="2.15"/>
<circle cx="445.9" cy="424.7" r="2.15"/>
<circle cx="378.8" cy="448.9" r="2.15"/>
<circle cx="374.4" cy="461.7" r="2.15"/>
<circle cx="424.1" cy="305.8" r="2.15"/>
<circle cx="347.8" cy="336.7" r="2.15"/>
<circle cx="444.7" cy="294.0" r="2.15"/>
<circle cx="408.1" cy="395.6" r="2.15"/>
<circle cx="420.4" cy="325.9" r="2.15"/>
<circle cx="492.5" cy="263.4" r="2.15"/>
<circle cx="325.6" cy="477.2" r="2.15"/>
<circle cx="499.7" cy="373.6" r="2.15"/>
<circle cx="435.6" cy="463.2" r="2.15"/>
<circle cx="425.0" cy="304.6" r="2.15"/>
<circle cx="324.8" cy="344.2" r="2.15"/>
<circle cx="316.1" cy="321.3" r="2.15"/>
<circle cx="285.2" cy="358.5" r="2.15"/>
<circle cx="280.7" cy="385.4" r="2.15"/>
<circle cx="412.8" cy="419.3" r="2.15"/>
<circle cx="401.7" cy="416.1" r="2.15"/>
<circle cx="461.1" cy="426.6" r="2.15"/>
<circle cx="430.7" cy="391.4" r="2.15"/>
<circle cx="371.5" cy="310.8" r="2.15"/>
<circle cx="423.5" cy="327.8" r="2.15"/>
<circle cx="377.7" cy="410.0" r="2.15"/>
<circle cx="394.5" cy="305.7" r="2.15"/>
<circle cx="346.9" cy="432.9" r="2.15"/>
<circle cx="443.7" cy="414.3" r="2.15"/>
<circle cx="287.2" cy="391.7" r="2.15"/>
<circle cx="316.4" cy="469.7" r="2.15"/>
<circle cx="442.3" cy="406.9" r="2.15"/>
<circle cx="326.7" cy="311.0" r="2.15"/>
<circle cx="358.4" cy="505.9" r="2.15"/>
<circle cx="339.2" cy="474.7" r="2.15"/>
<circle cx="441.6" cy="381.5" r="2.15"/>
<circle cx="259.2" cy="379.7" r="2.15"/>
<circle cx="365.7" cy="296.6" r="2.15"/>
<circle cx="318.3" cy="322.3" r="2.15"/>
<circle cx="366.8" cy="319.4" r="2.15"/>
<circle cx="264.8" cy="380.7" r="2.15"/>
<circle cx="453.5" cy="410.1" r="2.15"/>
<circle cx="360.4" cy="503.7" r="2.15"/>
<circle cx="220.9" cy="372.8" r="2.15"/>
<circle cx="454.0" cy="404.6" r="2.15"/>
<circle cx="368.1" cy="431.1" r="2.15"/>
<circle cx="329.1" cy="498.5" r="2.15"/>
<circle cx="492.0" cy="412.6" r="2.15"/>
<circle cx="447.1" cy="375.5" r="2.15"/>
<circle cx="409.8" cy="423.3" r="2.15"/>
<circle cx="482.5" cy="377.0" r="2.15"/>
<circle cx="345.8" cy="482.6" r="2.15"/>
<circle cx="314.6" cy="351.5" r="2.15"/>
<circle cx="428.1" cy="312.4" r="2.15"/>
<circle cx="474.5" cy="401.2" r="2.15"/>
<circle cx="292.4" cy="341.4" r="2.15"/>
<circle cx="362.7" cy="315.0" r="2.15"/>
<circle cx="349.7" cy="332.0" r="2.15"/>
<circle cx="260.4" cy="507.4" r="2.15"/>
<circle cx="443.6" cy="412.0" r="2.15"/>
<circle cx="245.5" cy="411.3" r="2.15"/>
<circle cx="343.9" cy="313.0" r="2.15"/>
<circle cx="443.1" cy="380.2" r="2.15"/>
<circle cx="392.1" cy="347.6" r="2.15"/>
<circle cx="340.4" cy="306.7" r="2.15"/>
<circle cx="338.0" cy="473.9" r="2.15"/>
<circle cx="308.0" cy="485.7" r="2.15"/>
<circle cx="402.1" cy="408.0" r="2.15"/>
<circle cx="483.3" cy="296.4" r="2.15"/>
<circle cx="423.4" cy="433.8" r="2.15"/>
<circle cx="361.4" cy="512.8" r="2.15"/>
<circle cx="434.3" cy="375.6" r="2.15"/>
<circle cx="410.2" cy="414.9" r="2.15"/>
<circle cx="366.7" cy="500.5" r="2.15"/>
<circle cx="335.9" cy="478.4" r="2.15"/>
<circle cx="250.9" cy="479.8" r="2.15"/>
<circle cx="447.9" cy="374.3" r="2.15"/>
<circle cx="381.6" cy="470.4" r="2.15"/>
<circle cx="268.6" cy="477.4" r="2.15"/>
<circle cx="220.9" cy="464.5" r="2.15"/>
<circle cx="442.9" cy="405.0" r="2.15"/>
<circle cx="438.4" cy="453.8" r="2.15"/>
<circle cx="347.2" cy="441.3" r="2.15"/>
<circle cx="425.6" cy="302.3" r="2.15"/>
<circle cx="442.6" cy="324.8" r="2.15"/>
<circle cx="444.6" cy="412.4" r="2.15"/>
<circle cx="386.1" cy="432.2" r="2.15"/>
<circle cx="396.9" cy="447.8" r="2.15"/>
<circle cx="273.9" cy="372.8" r="2.15"/>
<circle cx="357.4" cy="451.9" r="2.15"/>
<circle cx="386.1" cy="452.3" r="2.15"/>
<circle cx="437.1" cy="324.5" r="2.15"/>
<circle cx="298.5" cy="474.1" r="2.15"/>
<circle cx="348.5" cy="465.7" r="2.15"/>
<circle cx="350.5" cy="462.1" r="2.15"/>
<circle cx="251.3" cy="422.3" r="2.15"/>
<circle cx="437.5" cy="421.6" r="2.15"/>
<circle cx="426.3" cy="433.5" r="2.15"/>
<circle cx="372.1" cy="307.8" r="2.15"/>
<circle cx="380.9" cy="430.1" r="2.15"/>
<circle cx="439.1" cy="308.2" r="2.15"/>
<circle cx="375.8" cy="462.2" r="2.15"/>
<circle cx="474.7" cy="388.0" r="2.15"/>
<circle cx="374.7" cy="327.4" r="2.15"/>
<circle cx="441.4" cy="288.5" r="2.15"/>
<circle cx="497.7" cy="385.7" r="2.15"/>
<circle cx="405.2" cy="401.0" r="2.15"/>
<circle cx="355.8" cy="435.9" r="2.15"/>
<circle cx="407.3" cy="419.7" r="2.15"/>
<circle cx="431.5" cy="375.8" r="2.15"/>
<circle cx="343.7" cy="439.4" r="2.15"/>
<circle cx="375.2" cy="470.5" r="2.15"/>
<circle cx="350.2" cy="416.7" r="2.15"/>
<circle cx="259.2" cy="412.8" r="2.15"/>
<circle cx="396.4" cy="308.4" r="2.15"/>
<circle cx="487.7" cy="297.6" r="2.15"/>
<circle cx="389.8" cy="406.4" r="2.15"/>
<circle cx="498.6" cy="414.1" r="2.15"/>
<circle cx="263.3" cy="366.2" r="2.15"/>
<circle cx="254.1" cy="445.1" r="2.15"/>
<circle cx="417.6" cy="404.2" r="2.15"/>
<circle cx="306.6" cy="488.9" r="2.15"/>
<circle cx="304.3" cy="476.0" r="2.15"/>
<circle cx="467.1" cy="366.4" r="2.15"/>
<circle cx="440.5" cy="411.3" r="2.15"/>
<circle cx="328.5" cy="409.4" r="2.15"/>
<circle cx="400.5" cy="442.6" r="2.15"/>
<circle cx="496.5" cy="267.8" r="2.15"/>
<circle cx="225.0" cy="370.4" r="2.15"/>
<circle cx="422.8" cy="420.1" r="2.15"/>
<circle cx="275.1" cy="369.0" r="2.15"/>
<circle cx="354.8" cy="439.6" r="2.15"/>
<circle cx="360.5" cy="436.2" r="2.15"/>
<circle cx="475.4" cy="403.2" r="2.15"/>
<circle cx="374.9" cy="463.4" r="2.15"/>
<circle cx="370.1" cy="321.7" r="2.15"/>
<circle cx="395.4" cy="458.9" r="2.15"/>
<circle cx="396.3" cy="378.2" r="2.15"/>
<circle cx="348.7" cy="481.3" r="2.15"/>
<circle cx="386.1" cy="429.6" r="2.15"/>
<circle cx="270.4" cy="380.7" r="2.15"/>
<circle cx="460.8" cy="420.6" r="2.15"/>
<circle cx="408.6" cy="404.6" r="2.15"/>
<circle cx="423.8" cy="405.3" r="2.15"/>
<circle cx="377.3" cy="462.1" r="2.15"/>
<circle cx="221.0" cy="388.4" r="2.15"/>
<circle cx="433.1" cy="454.5" r="2.15"/>
<circle cx="239.1" cy="375.4" r="2.15"/>
<circle cx="239.5" cy="366.1" r="2.15"/>
<circle cx="282.1" cy="388.2" r="2.15"/>
<circle cx="440.6" cy="376.0" r="2.15"/>
<circle cx="355.4" cy="414.8" r="2.15"/>
<circle cx="257.9" cy="512.8" r="2.15"/>
<circle cx="422.6" cy="384.8" r="2.15"/>
<circle cx="504.8" cy="385.7" r="2.15"/>
<circle cx="443.0" cy="327.3" r="2.15"/>
<circle cx="437.8" cy="325.8" r="2.15"/>
<circle cx="421.8" cy="465.8" r="2.15"/>
<circle cx="327.9" cy="450.2" r="2.15"/>
<circle cx="435.4" cy="430.5" r="2.15"/>
<circle cx="491.8" cy="284.5" r="2.15"/>
<circle cx="493.0" cy="376.2" r="2.15"/>
<circle cx="380.0" cy="338.2" r="2.15"/>
<circle cx="406.2" cy="421.7" r="2.15"/>
<circle cx="506.0" cy="378.1" r="2.15"/>
<circle cx="453.8" cy="452.9" r="2.15"/>
<circle cx="503.8" cy="392.5" r="2.15"/>
<circle cx="258.4" cy="461.7" r="2.15"/>
<circle cx="336.4" cy="365.3" r="2.15"/>
<circle cx="245.9" cy="451.2" r="2.15"/>
<circle cx="277.3" cy="356.0" r="2.15"/>
<circle cx="327.5" cy="444.7" r="2.15"/>
<circle cx="324.3" cy="483.0" r="2.15"/>
<circle cx="437.6" cy="419.0" r="2.15"/>
<circle cx="439.3" cy="393.1" r="2.15"/>
<circle cx="377.5" cy="468.5" r="2.15"/>
<circle cx="468.8" cy="351.8" r="2.15"/>
<circle cx="358.9" cy="451.6" r="2.15"/>
<circle cx="299.4" cy="343.7" r="2.15"/>
<circle cx="402.7" cy="480.8" r="2.15"/>
<circle cx="328.1" cy="474.3" r="2.15"/>
<circle cx="329.6" cy="349.8" r="2.15"/>
<circle cx="451.2" cy="340.9" r="2.15"/>
<circle cx="442.8" cy="438.5" r="2.15"/>
<circle cx="308.4" cy="380.9" r="2.15"/>
<circle cx="338.0" cy="324.9" r="2.15"/>
<circle cx="319.0" cy="311.1" r="2.15"/>
<circle cx="351.7" cy="414.0" r="2.15"/>
<circle cx="438.4" cy="300.9" r="2.15"/>
<circle cx="446.3" cy="408.4" r="2.15"/>
<circle cx="349.3" cy="484.4" r="2.15"/>
<circle cx="431.1" cy="394.3" r="2.15"/>
<circle cx="452.7" cy="336.0" r="2.15"/>
<circle cx="336.7" cy="347.9" r="2.15"/>
<circle cx="323.0" cy="475.7" r="2.15"/>
<circle cx="375.4" cy="310.5" r="2.15"/>
<circle cx="429.3" cy="393.4" r="2.15"/>
<circle cx="290.2" cy="364.4" r="2.15"/>
<circle cx="223.5" cy="376.4" r="2.15"/>
<circle cx="255.1" cy="509.6" r="2.15"/>
<circle cx="428.4" cy="433.2" r="2.15"/>
<circle cx="454.9" cy="387.7" r="2.15"/>
<circle cx="493.6" cy="347.8" r="2.15"/>
<circle cx="429.9" cy="371.6" r="2.15"/>
<circle cx="255.0" cy="447.7" r="2.15"/>
<circle cx="392.1" cy="373.9" r="2.15"/>
<circle cx="373.9" cy="323.2" r="2.15"/>
<circle cx="225.8" cy="435.8" r="2.15"/>
<circle cx="377.6" cy="469.0" r="2.15"/>
<circle cx="436.3" cy="327.7" r="2.15"/>
<circle cx="385.7" cy="340.5" r="2.15"/>
<circle cx="310.0" cy="487.4" r="2.15"/>
<circle cx="262.1" cy="366.2" r="2.15"/>
<circle cx="367.0" cy="431.7" r="2.15"/>
<circle cx="424.7" cy="401.5" r="2.15"/>
<circle cx="399.7" cy="401.7" r="2.15"/>
<circle cx="354.0" cy="431.8" r="2.15"/>
<circle cx="353.7" cy="453.0" r="2.15"/>
<circle cx="376.3" cy="436.8" r="2.15"/>
<circle cx="388.2" cy="461.3" r="2.15"/>
<circle cx="357.6" cy="428.5" r="2.15"/>
<circle cx="474.9" cy="399.3" r="2.15"/>
<circle cx="340.8" cy="312.4" r="2.15"/>
<circle cx="387.4" cy="463.7" r="2.15"/>
<circle cx="224.5" cy="372.5" r="2.15"/>
<circle cx="506.0" cy="349.7" r="2.15"/>
<circle cx="432.7" cy="431.3" r="2.15"/>
<circle cx="427.5" cy="315.3" r="2.15"/>
<circle cx="322.9" cy="494.5" r="2.15"/>
<circle cx="495.6" cy="411.8" r="2.15"/>
<circle cx="429.6" cy="308.8" r="4"/>
<circle cx="224.2" cy="400.4" r="2.15"/>
<circle cx="372.6" cy="310.4" r="2.15"/>
<circle cx="364.2" cy="504.0" r="2.15"/>
<circle cx="379.0" cy="339.2" r="2.15"/>
<circle cx="359.0" cy="438.4" r="2.15"/>
<circle cx="391.4" cy="459.9" r="2.15"/>
<circle cx="417.4" cy="412.6" r="2.15"/>
<circle cx="426.4" cy="327.0" r="2.15"/>
<circle cx="403.3" cy="447.1" r="2.15"/>
<circle cx="465.8" cy="304.6" r="2.15"/>
<circle cx="350.4" cy="314.9" r="2.15"/>
<circle cx="328.5" cy="442.5" r="2.15"/>
<circle cx="488.0" cy="374.4" r="2.15"/>
<circle cx="276.4" cy="440.9" r="2.15"/>
<circle cx="370.7" cy="303.8" r="2.15"/>
<circle cx="479.4" cy="380.0" r="2.15"/>
<circle cx="340.2" cy="335.6" r="2.15"/>
<circle cx="377.5" cy="293.5" r="2.15"/>
<circle cx="317.2" cy="470.8" r="2.15"/>
<circle cx="440.3" cy="327.0" r="2.15"/>
<circle cx="449.3" cy="375.9" r="2.15"/>
<circle cx="398.6" cy="455.6" r="2.15"/>
<circle cx="359.6" cy="466.3" r="2.15"/>
<circle cx="361.1" cy="317.8" r="2.15"/>
<circle cx="350.2" cy="407.2" r="2.15"/>
<circle cx="442.9" cy="306.7" r="2.15"/>
<circle cx="225.4" cy="476.2" r="2.15"/>
<circle cx="456.7" cy="438.3" r="2.15"/>
<circle cx="244.4" cy="413.6" r="2.15"/>
<circle cx="380.7" cy="406.8" r="2.15"/>
<circle cx="303.1" cy="381.1" r="2.15"/>
<circle cx="222.8" cy="378.0" r="2.15"/>
<circle cx="482.1" cy="340.6" r="2.15"/>
<circle cx="442.9" cy="307.3" r="2.15"/>
<circle cx="366.1" cy="465.3" r="2.15"/>
<circle cx="388.5" cy="307.2" r="2.15"/>
<circle cx="309.3" cy="377.4" r="2.15"/>
<circle cx="394.2" cy="460.9" r="2.15"/>
<circle cx="447.0" cy="408.5" r="2.15"/>
<circle cx="378.3" cy="333.2" r="2.15"/>
<circle cx="441.2" cy="360.3" r="2.15"/>
<circle cx="456.2" cy="390.6" r="2.15"/>
<circle cx="386.3" cy="475.8" r="2.15"/>
<circle cx="425.9" cy="315.3" r="2.15"/>
<circle cx="468.5" cy="420.2" r="2.15"/>
<circle cx="373.4" cy="300.1" r="2.15"/>
<circle cx="256.9" cy="464.4" r="2.15"/>
<circle cx="378.0" cy="326.1" r="2.15"/>
<circle cx="365.4" cy="315.4" r="2.15"/>
<circle cx="425.3" cy="359.8" r="2.15"/>
<circle cx="354.9" cy="488.7" r="2.15"/>
<circle cx="443.2" cy="428.9" r="2.15"/>
<circle cx="363.5" cy="321.2" r="2.15"/>
<circle cx="399.2" cy="417.5" r="2.15"/>
<circle cx="447.6" cy="342.7" r="2.15"/>
<circle cx="409.7" cy="398.1" r="2.15"/>
<circle cx="350.7" cy="442.1" r="2.15"/>
<circle cx="363.3" cy="497.7" r="2.15"/>
<circle cx="352.7" cy="485.0" r="2.15"/>
<circle cx="340.1" cy="452.8" r="2.15"/>
<circle cx="424.9" cy="324.9" r="2.15"/>
<circle cx="413.0" cy="394.5" r="2.15"/>
<circle cx="285.8" cy="458.7" r="2.15"/>
<circle cx="491.0" cy="258.2" r="2.15"/>
<circle cx="434.3" cy="388.7" r="2.15"/>
<circle cx="359.9" cy="283.1" r="2.15"/>
<circle cx="421.6" cy="306.6" r="2.15"/>
<circle cx="370.8" cy="305.6" r="2.15"/>
<circle cx="317.0" cy="495.2" r="2.15"/>
<circle cx="448.3" cy="410.9" r="2.15"/>
<circle cx="423.0" cy="316.1" r="2.15"/>
<circle cx="419.8" cy="404.9" r="2.15"/>
<circle cx="335.1" cy="326.4" r="2.15"/>
<circle cx="357.5" cy="451.1" r="2.15"/>
<circle cx="359.0" cy="447.5" r="2.15"/>
<circle cx="285.0" cy="422.8" r="2.15"/>
<circle cx="323.6" cy="322.4" r="2.15"/>
<circle cx="277.1" cy="367.9" r="2.15"/>
<circle cx="488.4" cy="290.7" r="2.15"/>
<circle cx="451.8" cy="410.3" r="2.15"/>
<circle cx="281.5" cy="446.9" r="2.15"/>
<circle cx="303.8" cy="481.0" r="2.15"/>
<circle cx="349.1" cy="438.8" r="2.15"/>
<circle cx="398.8" cy="444.4" r="2.15"/>
<circle cx="485.5" cy="307.6" r="2.15"/>
<circle cx="412.8" cy="434.6" r="2.15"/>
<circle cx="390.1" cy="459.0" r="2.15"/>
<circle cx="261.5" cy="448.2" r="2.15"/>
<circle cx="256.6" cy="456.1" r="2.15"/>
<circle cx="453.2" cy="393.4" r="2.15"/>
<circle cx="359.2" cy="326.9" r="2.15"/>
<circle cx="328.9" cy="326.7" r="2.15"/>
<circle cx="289.0" cy="359.5" r="2.15"/>
<circle cx="356.4" cy="504.8" r="2.15"/>
<circle cx="378.2" cy="455.3" r="2.15"/>
<circle cx="492.2" cy="309.8" r="2.15"/>
<circle cx="270.0" cy="398.8" r="2.15"/>
<circle cx="376.8" cy="300.1" r="2.15"/>
<circle cx="397.6" cy="457.2" r="2.15"/>
<circle cx="449.6" cy="437.2" r="2.15"/>
<circle cx="484.4" cy="305.7" r="2.15"/>
<circle cx="344.6" cy="494.6" r="2.15"/>
<circle cx="343.4" cy="325.4" r="2.15"/>
<circle cx="226.4" cy="391.0" r="2.15"/>
<circle cx="357.5" cy="329.4" r="2.15"/>
<circle cx="454.5" cy="289.9" r="2.15"/>
<circle cx="355.2" cy="438.3" r="2.15"/>
<circle cx="448.3" cy="405.3" r="2.15"/>
<circle cx="342.3" cy="473.4" r="2.15"/>
<circle cx="273.0" cy="434.6" r="2.15"/>
<circle cx="251.9" cy="397.1" r="2.15"/>
<circle cx="374.5" cy="328.3" r="2.15"/>
<circle cx="425.8" cy="404.6" r="2.15"/>
<circle cx="379.9" cy="491.4" r="2.15"/>
<circle cx="341.5" cy="466.1" r="2.15"/>
<circle cx="466.6" cy="365.3" r="2.15"/>
<circle cx="401.7" cy="419.4" r="2.15"/>
<circle cx="364.0" cy="313.5" r="2.15"/>
<circle cx="287.5" cy="389.0" r="2.15"/>
<circle cx="447.3" cy="379.7" r="2.15"/>
<circle cx="407.9" cy="457.5" r="2.15"/>
<circle cx="386.6" cy="486.0" r="2.15"/>
<circle cx="491.7" cy="366.6" r="2.15"/>
<circle cx="417.6" cy="419.0" r="2.15"/>
<circle cx="255.9" cy="416.0" r="2.15"/>
<circle cx="374.6" cy="335.3" r="2.15"/>
<circle cx="350.9" cy="328.4" r="2.15"/>
<circle cx="492.3" cy="295.7" r="2.15"/>
<circle cx="234.5" cy="372.2" r="2.15"/>
<circle cx="427.4" cy="366.0" r="2.15"/>
<circle cx="464.8" cy="357.0" r="2.15"/>
<circle cx="463.3" cy="369.2" r="2.15"/>
<circle cx="412.7" cy="387.5" r="2.15"/>
<circle cx="336.3" cy="456.4" r="2.15"/>
<circle cx="428.7" cy="449.5" r="2.15"/>
<circle cx="421.9" cy="429.0" r="2.15"/>
<circle cx="432.9" cy="395.0" r="2.15"/>
<circle cx="373.9" cy="326.9" r="2.15"/>
<circle cx="347.9" cy="472.3" r="2.15"/>
<circle cx="304.2" cy="349.9" r="2.15"/>
<circle cx="328.5" cy="351.6" r="2.15"/>
<circle cx="435.9" cy="283.2" r="2.15"/>
<circle cx="318.8" cy="514.6" r="2.15"/>
<circle cx="340.9" cy="493.1" r="2.15"/>
<circle cx="338.9" cy="466.4" r="2.15"/>
<circle cx="472.5" cy="378.6" r="2.15"/>
<circle cx="472.7" cy="286.4" r="2.15"/>
<circle cx="491.7" cy="347.1" r="2.15"/>
<circle cx="422.1" cy="419.9" r="2.15"/>
<circle cx="353.3" cy="412.3" r="2.15"/>
<circle cx="426.3" cy="412.8" r="2.15"/>
<circle cx="438.7" cy="446.9" r="2.15"/>
<circle cx="428.8" cy="461.5" r="2.15"/>
<circle cx="470.3" cy="418.8" r="2.15"/>
<circle cx="281.3" cy="388.6" r="2.15"/>
<circle cx="395.7" cy="394.5" r="2.15"/>
<circle cx="307.1" cy="384.6" r="2.15"/>
<circle cx="278.1" cy="362.5" r="2.15"/>
<circle cx="322.4" cy="476.9" r="2.15"/>
<circle cx="475.4" cy="390.3" r="2.15"/>
<circle cx="446.1" cy="387.4" r="2.15"/>
<circle cx="479.5" cy="389.8" r="2.15"/>
<circle cx="368.6" cy="330.0" r="2.15"/>
<circle cx="454.6" cy="301.3" r="2.15"/>
<circle cx="405.0" cy="409.6" r="2.15"/>
<circle cx="252.8" cy="422.0" r="2.15"/>
<circle cx="446.0" cy="379.2" r="2.15"/>
<circle cx="403.2" cy="428.4" r="2.15"/>
<circle cx="346.6" cy="458.8" r="2.15"/>
<circle cx="385.8" cy="460.9" r="2.15"/>
<circle cx="375.0" cy="488.2" r="2.15"/>
<circle cx="273.6" cy="441.7" r="2.15"/>
<circle cx="272.3" cy="368.4" r="2.15"/>
<circle cx="506.0" cy="344.3" r="2.15"/>
<circle cx="437.5" cy="323.4" r="2.15"/>
<circle cx="405.8" cy="376.0" r="2.15"/>
<circle cx="497.1" cy="387.6" r="2.15"/>
<circle cx="334.5" cy="466.0" r="2.15"/>
<circle cx="366.6" cy="283.0" r="2.15"/>
<circle cx="328.9" cy="477.4" r="2.15"/>
<circle cx="223.7" cy="428.6" r="2.15"/>
<circle cx="346.8" cy="365.2" r="2.15"/>
<circle cx="302.6" cy="396.7" r="2.15"/>
<circle cx="449.8" cy="448.6" r="2.15"/>
<circle cx="340.5" cy="477.3" r="2.15"/>
<circle cx="494.9" cy="410.9" r="2.15"/>
<circle cx="412.5" cy="317.2" r="2.15"/>
<circle cx="258.8" cy="398.2" r="2.15"/>
<circle cx="388.6" cy="312.1" r="2.15"/>
<circle cx="462.5" cy="368.4" r="2.15"/>
<circle cx="373.8" cy="467.7" r="2.15"/>
<circle cx="379.7" cy="464.3" r="2.15"/>
<circle cx="349.9" cy="327.8" r="2.15"/>
<circle cx="342.4" cy="484.9" r="2.15"/>
<circle cx="246.0" cy="368.8" r="2.15"/>
<circle cx="305.8" cy="345.2" r="2.15"/>
<circle cx="312.1" cy="517.4" r="2.15"/>
<circle cx="385.7" cy="461.7" r="2.15"/>
<circle cx="255.7" cy="503.4" r="2.15"/>
<circle cx="477.8" cy="405.8" r="2.15"/>
<circle cx="444.7" cy="311.2" r="2.15"/>
<circle cx="386.6" cy="436.5" r="2.15"/>
<circle cx="307.9" cy="494.1" r="2.15"/>
<circle cx="495.3" cy="361.3" r="2.15"/>
<circle cx="474.1" cy="292.5" r="2.15"/>
<circle cx="260.3" cy="383.7" r="2.15"/>
<circle cx="471.9" cy="319.6" r="2.15"/>
<circle cx="305.6" cy="463.6" r="2.15"/>
<circle cx="441.8" cy="370.7" r="2.15"/>
<circle cx="463.9" cy="302.2" r="2.15"/>
<circle cx="257.8" cy="509.9" r="2.15"/>
<circle cx="427.8" cy="370.5" r="2.15"/>
<circle cx="282.0" cy="365.5" r="2.15"/>
<circle cx="423.2" cy="350.6" r="2.15"/>
<circle cx="347.6" cy="410.9" r="2.15"/>
<circle cx="447.6" cy="430.1" r="2.15"/>
<circle cx="361.8" cy="505.4" r="2.15"/>
<circle cx="492.3" cy="376.4" r="2.15"/>
<circle cx="374.2" cy="312.6" r="2.15"/>
<circle cx="442.7" cy="304.0" r="2.15"/>
<circle cx="423.0" cy="425.3" r="2.15"/>
<circle cx="430.3" cy="371.7" r="2.15"/>
<circle cx="299.1" cy="487.0" r="2.15"/>
<circle cx="246.5" cy="365.6" r="2.15"/>
<circle cx="368.4" cy="432.2" r="2.15"/>
<circle cx="337.1" cy="489.3" r="2.15"/>
<circle cx="345.4" cy="471.0" r="2.15"/>
<circle cx="408.5" cy="392.6" r="2.15"/>
<circle cx="363.1" cy="312.0" r="2.15"/>
<circle cx="265.4" cy="363.9" r="2.15"/>
<circle cx="310.1" cy="350.2" r="2.15"/>
<circle cx="432.2" cy="372.2" r="2.15"/>
<circle cx="426.8" cy="451.2" r="2.15"/>
<circle cx="319.7" cy="305.9" r="2.15"/>
<circle cx="274.9" cy="346.2" r="2.15"/>
<circle cx="442.3" cy="296.4" r="2.15"/>
<circle cx="225.8" cy="388.6" r="2.15"/>
<circle cx="335.5" cy="385.4" r="2.15"/>
<circle cx="420.9" cy="374.8" r="2.15"/>
<circle cx="441.9" cy="327.3" r="2.15"/>
<circle cx="337.8" cy="351.6" r="2.15"/>
<circle cx="397.3" cy="431.4" r="2.15"/>
<circle cx="494.6" cy="355.5" r="2.15"/>
<circle cx="223.4" cy="387.4" r="2.15"/>
<circle cx="219.0" cy="432.5" r="2.15"/>
<circle cx="425.8" cy="398.0" r="2.15"/>
<circle cx="451.0" cy="303.6" r="2.15"/>
<circle cx="333.5" cy="352.6" r="2.15"/>
<circle cx="405.8" cy="408.3" r="2.15"/>
<circle cx="320.2" cy="474.9" r="2.15"/>
<circle cx="324.8" cy="309.4" r="2.15"/>
<circle cx="304.5" cy="477.0" r="6"/>
<circle cx="430.5" cy="297.0" r="2.15"/>
<circle cx="351.9" cy="462.3" r="2.15"/>
<circle cx="351.9" cy="316.2" r="2.15"/>
<circle cx="369.7" cy="477.3" r="2.15"/>
<circle cx="337.5" cy="364.4" r="2.15"/>
<circle cx="360.5" cy="500.4" r="2.15"/>
<circle cx="358.1" cy="489.6" r="2.15"/>
<circle cx="377.0" cy="301.1" r="2.15"/>
<circle cx="248.6" cy="447.3" r="2.15"/>
<circle cx="415.8" cy="447.3" r="2.15"/>
<circle cx="431.1" cy="302.5" r="2.15"/>
<circle cx="489.9" cy="378.4" r="2.15"/>
<circle cx="378.2" cy="410.4" r="2.15"/>
<circle cx="297.5" cy="365.9" r="2.15"/>
<circle cx="428.1" cy="366.2" r="2.15"/>
<circle cx="371.0" cy="324.4" r="2.15"/>
<circle cx="379.7" cy="299.1" r="2.15"/>
<circle cx="264.7" cy="363.5" r="2.15"/>
<circle cx="396.3" cy="326.2" r="2.15"/>
<circle cx="266.9" cy="431.0" r="2.15"/>
<circle cx="488.4" cy="365.7" r="2.15"/>
<circle cx="493.8" cy="260.8" r="2.15"/>
<circle cx="450.3" cy="411.9" r="2.15"/>
<circle cx="414.4" cy="318.7" r="2.15"/>
<circle cx="359.1" cy="327.6" r="2.15"/>
<circle cx="342.2" cy="293.0" r="2.15"/>
<circle cx="506.0" cy="293.2" r="2.15"/>
<circle cx="506.0" cy="318.9" r="2.15"/>
<circle cx="351.4" cy="367.6" r="2.15"/>
<circle cx="479.7" cy="290.3" r="2.15"/>
<circle cx="273.5" cy="368.9" r="2.15"/>
<circle cx="405.7" cy="437.5" r="2.15"/>
<circle cx="406.5" cy="444.0" r="2.15"/>
<circle cx="416.8" cy="394.5" r="2.15"/>
<circle cx="441.9" cy="380.0" r="2.15"/>
<circle cx="265.6" cy="366.4" r="2.15"/>
<circle cx="346.4" cy="474.8" r="2.15"/>
<circle cx="336.3" cy="327.9" r="2.15"/>
<circle cx="247.5" cy="442.8" r="2.15"/>
<circle cx="499.9" cy="300.8" r="2.15"/>
<circle cx="279.1" cy="363.1" r="2.15"/>
<circle cx="394.6" cy="372.3" r="2.15"/>
<circle cx="346.2" cy="365.2" r="2.15"/>
<circle cx="344.2" cy="331.8" r="2.15"/>
<circle cx="435.5" cy="456.5" r="2.15"/>
<circle cx="366.1" cy="325.9" r="2.15"/>
<circle cx="449.4" cy="415.3" r="2.15"/>
<circle cx="475.0" cy="427.9" r="2.15"/>
<circle cx="437.4" cy="375.2" r="2.15"/>
<circle cx="342.4" cy="293.7" r="2.15"/>
<circle cx="246.7" cy="380.0" r="2.15"/>
<circle cx="398.3" cy="428.6" r="2.15"/>
<circle cx="319.9" cy="473.2" r="2.15"/>
<circle cx="342.1" cy="473.4" r="2.15"/>
<circle cx="425.2" cy="306.0" r="2.15"/>
<circle cx="332.8" cy="412.0" r="2.15"/>
<circle cx="341.5" cy="301.2" r="2.15"/>
<circle cx="500.3" cy="350.0" r="2.15"/>
<circle cx="437.3" cy="395.3" r="2.15"/>
<circle cx="276.6" cy="339.0" r="3.5"/>
<circle cx="367.9" cy="406.6" r="2.15"/>
<circle cx="437.1" cy="393.3" r="2.15"/>
<circle cx="402.0" cy="430.1" r="2.15"/>
<circle cx="410.4" cy="390.2" r="2.15"/>
<circle cx="432.6" cy="374.5" r="2.15"/>
<circle cx="261.9" cy="414.3" r="2.15"/>
<circle cx="494.0" cy="371.8" r="2.15"/>
<circle cx="360.7" cy="447.5" r="2.15"/>
<circle cx="355.8" cy="341.5" r="2.15"/>
<circle cx="302.4" cy="366.9" r="2.15"/>
<circle cx="437.2" cy="442.4" r="2.15"/>
<circle cx="364.8" cy="457.0" r="2.15"/>
<circle cx="425.3" cy="421.4" r="2.15"/>
<circle cx="333.6" cy="481.4" r="2.15"/>
<circle cx="365.5" cy="426.3" r="2.15"/>
<circle cx="484.6" cy="292.9" r="2.15"/>
<circle cx="406.1" cy="374.2" r="2.15"/>
<circle cx="381.5" cy="455.8" r="2.15"/>
<circle cx="396.9" cy="447.6" r="2.15"/>
<circle cx="248.1" cy="392.4" r="2.15"/>
<circle cx="256.9" cy="510.7" r="2.15"/>
<circle cx="380.9" cy="302.2" r="2.15"/>
<circle cx="383.5" cy="486.5" r="2.15"/>
<circle cx="366.6" cy="331.5" r="2.15"/>
<circle cx="298.2" cy="370.3" r="2.15"/>
<circle cx="326.2" cy="307.1" r="2.15"/>
<circle cx="439.2" cy="427.1" r="2.15"/>
<circle cx="340.2" cy="339.1" r="2.15"/>
<circle cx="378.1" cy="456.5" r="2.15"/>
<circle cx="316.3" cy="484.3" r="2.15"/>
<circle cx="384.5" cy="490.0" r="2.15"/>
<circle cx="479.3" cy="379.0" r="2.15"/>
<circle cx="351.5" cy="450.9" r="2.15"/>
<circle cx="407.8" cy="390.9" r="2.15"/>
<circle cx="351.5" cy="481.7" r="2.15"/>
<circle cx="319.5" cy="471.3" r="2.15"/>
<circle cx="278.0" cy="450.2" r="2.15"/>
<circle cx="439.3" cy="380.5" r="2.15"/>
<circle cx="459.7" cy="365.2" r="2.15"/>
<circle cx="289.2" cy="327.0" r="2.15"/>
<circle cx="336.9" cy="451.3" r="2.15"/>
<circle cx="472.1" cy="394.0" r="2.15"/>
<circle cx="313.1" cy="515.8" r="2.15"/>
<circle cx="359.7" cy="320.9" r="2.15"/>
<circle cx="459.5" cy="421.3" r="2.15"/>
<circle cx="382.2" cy="487.9" r="2.15"/>
<circle cx="397.8" cy="328.4" r="2.15"/>
<circle cx="335.5" cy="332.1" r="2.15"/>
<circle cx="354.1" cy="457.9" r="2.15"/>
<circle cx="380.9" cy="450.7" r="2.15"/>
<circle cx="419.0" cy="402.8" r="2.15"/>
<circle cx="378.5" cy="461.3" r="2.15"/>
<circle cx="238.4" cy="362.7" r="2.15"/>
<circle cx="344.1" cy="470.8" r="2.15"/>
<circle cx="444.1" cy="382.6" r="2.15"/>
<circle cx="355.5" cy="429.1" r="2.15"/>
<circle cx="457.8" cy="337.2" r="2.15"/>
<circle cx="407.9" cy="415.5" r="2.15"/>
<circle cx="467.0" cy="389.0" r="2.15"/>
<circle cx="368.2" cy="459.1" r="2.15"/>
<circle cx="424.1" cy="312.2" r="2.15"/>
<circle cx="307.9" cy="470.3" r="2.15"/>
<circle cx="455.3" cy="376.4" r="2.15"/>
<circle cx="321.9" cy="460.2" r="2.15"/>
<circle cx="335.6" cy="338.4" r="2.15"/>
<circle cx="486.2" cy="305.0" r="2.15"/>
<circle cx="435.9" cy="381.1" r="2.15"/>
<circle cx="410.8" cy="393.6" r="2.15"/>
<circle cx="254.9" cy="373.7" r="2.15"/>
<circle cx="342.9" cy="303.1" r="2.15"/>
<circle cx="420.4" cy="415.0" r="2.15"/>
<circle cx="302.1" cy="397.1" r="2.15"/>
<circle cx="470.2" cy="371.7" r="2.15"/>
<circle cx="265.3" cy="398.6" r="2.15"/>
<circle cx="377.6" cy="431.9" r="2.15"/>
<circle cx="472.8" cy="399.6" r="2.15"/>
<circle cx="442.0" cy="376.1" r="2.15"/>
<circle cx="335.5" cy="354.6" r="2.15"/>
<circle cx="228.6" cy="405.1" r="2.15"/>
<circle cx="239.7" cy="370.2" r="2.15"/>
<circle cx="506.0" cy="347.6" r="2.15"/>
<circle cx="333.2" cy="415.6" r="2.15"/>
<circle cx="251.4" cy="447.8" r="2.15"/>
<circle cx="286.0" cy="393.2" r="2.15"/>
<circle cx="345.8" cy="338.1" r="2.15"/>
<circle cx="351.2" cy="462.7" r="2.15"/>
<circle cx="450.8" cy="371.9" r="2.15"/>
<circle cx="423.4" cy="324.6" r="2.15"/>
<circle cx="414.1" cy="393.2" r="2.15"/>
<circle cx="441.1" cy="360.3" r="2.15"/>
<circle cx="434.2" cy="395.4" r="2.15"/>
<circle cx="372.6" cy="322.9" r="2.15"/>
<circle cx="359.4" cy="434.6" r="2.15"/>
<circle cx="419.6" cy="451.1" r="2.15"/>
<circle cx="438.5" cy="417.2" r="2.15"/>
<circle cx="333.1" cy="353.9" r="2.15"/>
<circle cx="403.3" cy="409.6" r="2.15"/>
<circle cx="356.2" cy="488.5" r="2.15"/>
<circle cx="225.3" cy="403.3" r="2.15"/>
<circle cx="470.6" cy="368.0" r="2.15"/>
<circle cx="352.1" cy="334.8" r="2.15"/>
<circle cx="440.5" cy="396.0" r="2.15"/>
<circle cx="346.5" cy="312.3" r="2.15"/>
<circle cx="437.9" cy="461.5" r="2.15"/>
<circle cx="409.2" cy="394.7" r="2.15"/>
<circle cx="490.9" cy="289.9" r="2.15"/>
<circle cx="442.0" cy="283.1" r="2.15"/>
<circle cx="475.7" cy="375.6" r="2.15"/>
<circle cx="333.4" cy="463.9" r="2.15"/>
<circle cx="340.6" cy="332.5" r="2.15"/>
<circle cx="373.0" cy="323.3" r="2.15"/>
<circle cx="328.6" cy="304.7" r="2.15"/>
<circle cx="338.7" cy="404.3" r="2.15"/>
<circle cx="410.2" cy="418.9" r="2.15"/>
<circle cx="354.6" cy="328.8" r="2.15"/>
<circle cx="436.3" cy="362.9" r="2.15"/>
<circle cx="451.0" cy="376.0" r="2.15"/>
<circle cx="220.3" cy="395.1" r="2.15"/>
<circle cx="488.8" cy="317.4" r="2.15"/>
<circle cx="421.4" cy="319.4" r="2.15"/>
<circle cx="392.7" cy="439.7" r="2.15"/>
<circle cx="447.6" cy="372.1" r="2.15"/>
<circle cx="442.6" cy="411.3" r="2.15"/>
<circle cx="334.9" cy="324.8" r="2.15"/>
<circle cx="272.4" cy="372.1" r="2.15"/>
<circle cx="362.7" cy="315.3" r="2.15"/>
<circle cx="441.5" cy="367.4" r="2.15"/>
<circle cx="379.3" cy="487.3" r="2.15"/>
<circle cx="426.8" cy="403.3" r="2.15"/>
<circle cx="408.1" cy="461.3" r="2.15"/>
<circle cx="481.3" cy="379.5" r="2.15"/>
<circle cx="348.6" cy="315.2" r="2.15"/>
<circle cx="303.3" cy="335.7" r="2.15"/>
<circle cx="436.2" cy="453.5" r="2.15"/>
<circle cx="346.3" cy="332.0" r="2.15"/>
<circle cx="473.7" cy="405.3" r="2.15"/>
<circle cx="501.8" cy="371.3" r="2.15"/>
<circle cx="334.2" cy="385.9" r="2.15"/>
<circle cx="356.7" cy="330.3" r="2.15"/>
<circle cx="310.1" cy="389.2" r="2.15"/>
<circle cx="268.3" cy="475.0" r="2.15"/>
<circle cx="329.1" cy="327.8" r="2.15"/>
<circle cx="489.7" cy="389.9" r="2.15"/>
<circle cx="346.8" cy="519.5" r="2.15"/>
<circle cx="455.8" cy="391.5" r="2.15"/>
<circle cx="365.6" cy="288.2" r="2.15"/>
<circle cx="378.2" cy="344.1" r="2.15"/>
<circle cx="339.2" cy="492.0" r="2.15"/>
<circle cx="224.6" cy="396.0" r="2.15"/>
<circle cx="434.1" cy="455.3" r="2.15"/>
<circle cx="268.2" cy="372.2" r="2.15"/>
<circle cx="441.7" cy="297.4" r="2.15"/>
<circle cx="272.1" cy="384.0" r="2.15"/>
<circle cx="396.4" cy="425.1" r="2.15"/>
<circle cx="350.4" cy="474.1" r="2.15"/>
<circle cx="389.3" cy="490.0" r="2.15"/>
<circle cx="261.3" cy="380.0" r="2.15"/>
<circle cx="334.0" cy="383.5" r="2.15"/>
<circle cx="356.8" cy="461.9" r="2.15"/>
<circle cx="346.5" cy="489.5" r="2.15"/>
<circle cx="415.2" cy="446.4" r="2.15"/>
<circle cx="369.3" cy="330.4" r="2.15"/>
<circle cx="415.9" cy="411.1" r="2.15"/>
<circle cx="443.3" cy="382.1" r="2.15"/>
<circle cx="380.7" cy="487.9" r="2.15"/>
<circle cx="506.0" cy="381.2" r="2.15"/>
<circle cx="496.2" cy="365.1" r="2.15"/>
<circle cx="280.2" cy="417.5" r="2.15"/>
<circle cx="474.0" cy="376.7" r="2.15"/>
<circle cx="426.7" cy="308.9" r="2.15"/>
<circle cx="339.5" cy="478.4" r="2.15"/>
<circle cx="412.8" cy="318.4" r="2.15"/>
<circle cx="314.9" cy="487.2" r="2.15"/>
<circle cx="280.5" cy="530.5" r="2.15"/>
<circle cx="381.4" cy="310.5" r="2.15"/>
<circle cx="394.9" cy="318.1" r="2.15"/>
<circle cx="335.4" cy="322.1" r="2.15"/>
<circle cx="446.0" cy="413.3" r="2.15"/>
<circle cx="335.0" cy="404.7" r="2.15"/>
<circle cx="375.6" cy="470.3" r="2.15"/>
<circle cx="286.1" cy="393.2" r="2.15"/>
<circle cx="322.0" cy="326.1" r="2.15"/>
<circle cx="370.8" cy="325.7" r="2.15"/>
<circle cx="482.3" cy="401.8" r="2.15"/>
<circle cx="346.4" cy="449.3" r="2.15"/>
<circle cx="465.5" cy="427.3" r="2.15"/>
<circle cx="403.5" cy="295.5" r="2.15"/>
<circle cx="357.1" cy="454.5" r="2.15"/>
<circle cx="335.7" cy="457.8" r="2.15"/>
<circle cx="393.4" cy="322.2" r="2.15"/>
<circle cx="226.4" cy="473.3" r="2.15"/>
<circle cx="335.6" cy="477.6" r="2.15"/>
<circle cx="365.4" cy="504.3" r="2.15"/>
<circle cx="317.6" cy="522.5" r="2.15"/>
<circle cx="429.0" cy="398.4" r="2.15"/>
<circle cx="490.0" cy="408.6" r="2.15"/>
<circle cx="223.5" cy="386.9" r="2.15"/>
<circle cx="408.0" cy="424.2" r="2.15"/>
<circle cx="436.2" cy="330.6" r="2.15"/>
<circle cx="425.7" cy="300.7" r="2.15"/>
<circle cx="404.0" cy="420.8" r="2.15"/>
<circle cx="221.3" cy="434.3" r="2.15"/>
<circle cx="450.9" cy="404.2" r="2.15"/>
<circle cx="433.2" cy="375.0" r="2.15"/>
<circle cx="288.9" cy="369.5" r="2.15"/>
<circle cx="238.7" cy="438.3" r="2.15"/>
<circle cx="487.7" cy="386.7" r="2.15"/>
<circle cx="259.0" cy="509.6" r="2.15"/>
<circle cx="258.1" cy="465.4" r="2.15"/>
<circle cx="347.1" cy="516.6" r="2.15"/>
<circle cx="227.1" cy="477.1" r="2.15"/>
<circle cx="423.3" cy="415.5" r="2.15"/>
<circle cx="249.7" cy="461.8" r="2.15"/>
<circle cx="269.5" cy="371.5" r="2.15"/>
<circle cx="302.9" cy="343.2" r="2.15"/>
<circle cx="342.1" cy="447.1" r="2.15"/>
<circle cx="489.6" cy="350.6" r="2.15"/>
<circle cx="443.4" cy="413.3" r="2.15"/>
<circle cx="468.5" cy="298.3" r="2.15"/>
<circle cx="461.9" cy="433.2" r="2.15"/>
<circle cx="494.0" cy="363.4" r="2.15"/>
<circle cx="358.3" cy="322.6" r="2.15"/>
<circle cx="295.0" cy="342.3" r="2.15"/>
<circle cx="299.8" cy="395.5" r="2.15"/>
<circle cx="473.7" cy="405.1" r="2.15"/>
<circle cx="344.4" cy="451.1" r="2.15"/>
<circle cx="497.8" cy="408.6" r="2.15"/>
<circle cx="319.9" cy="527.2" r="2.15"/>
<circle cx="438.0" cy="378.2" r="2.15"/>
<circle cx="325.7" cy="338.2" r="2.15"/>
<circle cx="275.5" cy="464.2" r="2.15"/>
<circle cx="340.9" cy="310.8" r="2.15"/>
<circle cx="469.3" cy="397.8" r="2.15"/>
<circle cx="396.3" cy="311.7" r="2.15"/>
<circle cx="445.0" cy="372.1" r="2.15"/>
<circle cx="418.8" cy="455.1" r="2.15"/>
<circle cx="379.6" cy="484.6" r="2.15"/>
<circle cx="371.2" cy="469.7" r="2.15"/>
<circle cx="371.9" cy="431.5" r="2.15"/>
<circle cx="269.7" cy="482.1" r="2.15"/>
<circle cx="414.2" cy="443.1" r="2.15"/>
<circle cx="316.1" cy="302.6" r="2.15"/>
<circle cx="448.6" cy="378.6" r="2.15"/>
<circle cx="413.8" cy="448.4" r="2.15"/>
<circle cx="471.1" cy="283.8" r="2.15"/>
<circle cx="413.6" cy="445.5" r="2.15"/>
<circle cx="324.4" cy="308.9" r="2.15"/>
<circle cx="433.4" cy="449.9" r="2.15"/>
<circle cx="382.7" cy="478.7" r="2.15"/>
<circle cx="426.9" cy="315.5" r="2.15"/>
<circle cx="293.4" cy="343.3" r="2.15"/>
<circle cx="488.7" cy="306.4" r="2.15"/>
<circle cx="441.5" cy="314.9" r="2.15"/>
<circle cx="386.6" cy="335.4" r="2.15"/>
<circle cx="387.0" cy="448.6" r="2.15"/>
<circle cx="280.0" cy="445.2" r="2.15"/>
<circle cx="408.7" cy="408.6" r="2.15"/>
<circle cx="299.5" cy="364.1" r="2.15"/>
<circle cx="343.1" cy="370.9" r="2.15"/>
<circle cx="287.1" cy="417.8" r="2.15"/>
<circle cx="346.0" cy="475.0" r="8"/>
<circle cx="380.6" cy="486.4" r="2.15"/>
<circle cx="470.6" cy="387.7" r="2.15"/>
<circle cx="471.2" cy="290.0" r="2.15"/>
<circle cx="351.1" cy="413.4" r="2.15"/>
<circle cx="361.9" cy="438.3" r="2.15"/>
<circle cx="346.3" cy="368.7" r="2.15"/>
<circle cx="478.7" cy="410.2" r="2.15"/>
<circle cx="263.6" cy="383.4" r="2.15"/>
<circle cx="332.6" cy="381.0" r="2.15"/>
<circle cx="320.8" cy="476.0" r="2.15"/>
<circle cx="445.9" cy="445.9" r="2.15"/>
<circle cx="364.3" cy="283.9" r="2.15"/>
<circle cx="489.6" cy="351.4" r="2.15"/>
<circle cx="332.1" cy="455.7" r="2.15"/>
<circle cx="389.2" cy="460.4" r="2.15"/>
<circle cx="380.4" cy="341.4" r="2.15"/>
<circle cx="469.4" cy="384.7" r="2.15"/>
<circle cx="420.9" cy="381.5" r="2.15"/>
<circle cx="425.4" cy="306.1" r="2.15"/>
<circle cx="431.7" cy="348.1" r="2.15"/>
<circle cx="285.6" cy="386.5" r="2.15"/>
<circle cx="281.3" cy="445.0" r="2.15"/>
<circle cx="395.3" cy="393.3" r="2.15"/>
<circle cx="282.5" cy="350.8" r="2.15"/>
<circle cx="430.1" cy="391.3" r="2.15"/>
<circle cx="344.4" cy="490.8" r="2.15"/>
<circle cx="375.1" cy="301.9" r="2.15"/>
<circle cx="390.9" cy="441.7" r="2.15"/>
<circle cx="408.5" cy="453.0" r="2.15"/>
<circle cx="437.5" cy="384.1" r="2.15"/>
<circle cx="388.6" cy="485.7" r="2.15"/>
<circle cx="404.3" cy="330.9" r="2.15"/>
<circle cx="216.8" cy="420.0" r="2.15"/>
<circle cx="289.3" cy="373.6" r="2.15"/>
<circle cx="427.1" cy="373.9" r="2.15"/>
<circle cx="363.1" cy="284.6" r="2.15"/>
<circle cx="424.6" cy="357.8" r="2.15"/>
<circle cx="249.9" cy="415.7" r="2.15"/>
<circle cx="423.7" cy="362.8" r="2.15"/>
<circle cx="349.1" cy="426.7" r="2.15"/>
<circle cx="334.4" cy="486.5" r="2.15"/>
<circle cx="444.8" cy="379.2" r="2.15"/>
<circle cx="455.5" cy="298.3" r="2.15"/>
<circle cx="316.6" cy="464.8" r="2.15"/>
<circle cx="429.1" cy="401.4" r="2.15"/>
<circle cx="329.6" cy="441.6" r="2.15"/>
<circle cx="258.1" cy="501.7" r="2.15"/>
<circle cx="337.6" cy="486.4" r="2.15"/>
<circle cx="496.0" cy="344.6" r="2.15"/>
<circle cx="415.0" cy="286.9" r="2.15"/>
<circle cx="464.8" cy="362.2" r="2.15"/>
<circle cx="348.5" cy="481.9" r="2.15"/>
<circle cx="436.0" cy="375.8" r="2.15"/>
<circle cx="429.2" cy="362.8" r="2.15"/>
<circle cx="373.8" cy="297.8" r="2.15"/>
<circle cx="452.7" cy="451.4" r="2.15"/>
<circle cx="444.0" cy="377.8" r="2.15"/>
<circle cx="347.9" cy="484.2" r="2.15"/>
<circle cx="332.0" cy="410.5" r="2.15"/>
<circle cx="320.4" cy="480.4" r="2.15"/>
<circle cx="317.6" cy="479.8" r="2.15"/>
<circle cx="383.6" cy="451.8" r="2.15"/>
<circle cx="363.6" cy="288.6" r="2.15"/>
<circle cx="357.8" cy="501.3" r="2.15"/>
<circle cx="398.6" cy="461.1" r="2.15"/>
<circle cx="495.7" cy="303.4" r="2.15"/>
<circle cx="334.8" cy="346.8" r="2.15"/>
<circle cx="304.2" cy="485.7" r="2.15"/>
<circle cx="369.8" cy="408.0" r="2.15"/>
<circle cx="306.0" cy="386.7" r="2.15"/>
<circle cx="441.9" cy="384.7" r="2.15"/>
<circle cx="437.2" cy="363.6" r="2.15"/>
<circle cx="429.9" cy="297.5" r="2.15"/>
<circle cx="424.2" cy="434.2" r="2.15"/>
<circle cx="350.4" cy="481.0" r="2.15"/>
<circle cx="374.6" cy="462.0" r="2.15"/>
<circle cx="427.2" cy="348.0" r="2.15"/>
<circle cx="340.5" cy="387.4" r="2.15"/>
<circle cx="358.8" cy="492.6" r="2.15"/>
<circle cx="396.1" cy="310.1" r="2.15"/>
<circle cx="281.0" cy="354.4" r="2.15"/>
<circle cx="334.9" cy="307.5" r="2.15"/>
<circle cx="279.1" cy="444.5" r="2.15"/>
<circle cx="461.4" cy="431.6" r="2.15"/>
<circle cx="304.2" cy="477.6" r="2.15"/>
<circle cx="237.0" cy="438.5" r="2.15"/>
<circle cx="275.4" cy="365.4" r="2.15"/>
<circle cx="441.7" cy="296.4" r="2.15"/>
<circle cx="348.6" cy="462.9" r="2.15"/>
<circle cx="386.3" cy="310.5" r="2.15"/>
<circle cx="443.7" cy="376.9" r="2.15"/>
<circle cx="472.0" cy="369.7" r="2.15"/>
<circle cx="463.6" cy="416.4" r="2.15"/>
<circle cx="302.1" cy="462.3" r="2.15"/>
<circle cx="290.7" cy="456.7" r="2.15"/>
<circle cx="425.9" cy="299.4" r="2.15"/>
<circle cx="254.5" cy="424.2" r="2.15"/>
<circle cx="447.0" cy="368.1" r="2.15"/>
<circle cx="361.7" cy="300.8" r="2.15"/>
<circle cx="485.0" cy="352.1" r="2.15"/>
<circle cx="366.6" cy="320.6" r="2.15"/>
<circle cx="411.6" cy="398.7" r="2.15"/>
<circle cx="472.3" cy="306.2" r="2.15"/>
<circle cx="480.4" cy="407.3" r="2.15"/>
<circle cx="387.7" cy="452.9" r="2.15"/>
<circle cx="370.5" cy="329.6" r="2.15"/>
<circle cx="243.5" cy="371.5" r="2.15"/>
<circle cx="428.8" cy="446.1" r="2.15"/>
<circle cx="489.1" cy="296.3" r="2.15"/>
<circle cx="423.3" cy="326.9" r="2.15"/>
<circle cx="249.3" cy="398.6" r="2.15"/>
<circle cx="257.8" cy="416.1" r="2.15"/>
<circle cx="407.7" cy="422.8" r="2.15"/>
<circle cx="336.3" cy="355.7" r="2.15"/>
<circle cx="302.1" cy="351.7" r="2.15"/>
<circle cx="350.1" cy="393.0" r="2.15"/>
<circle cx="425.0" cy="438.4" r="2.15"/>
<circle cx="480.7" cy="424.7" r="2.15"/>
<circle cx="388.9" cy="461.8" r="2.15"/>
<circle cx="389.7" cy="483.9" r="2.15"/>
<circle cx="430.6" cy="449.9" r="2.15"/>
<circle cx="370.5" cy="328.2" r="2.15"/>
<circle cx="220.2" cy="466.7" r="2.15"/>
<circle cx="442.1" cy="379.3" r="2.15"/>
<circle cx="451.4" cy="308.5" r="2.15"/>
<circle cx="340.0" cy="308.4" r="2.15"/>
<circle cx="401.2" cy="460.2" r="2.15"/>
<circle cx="349.3" cy="443.9" r="2.15"/>
<circle cx="365.1" cy="281.0" r="2.15"/>
<circle cx="468.9" cy="309.0" r="2.15"/>
<circle cx="269.7" cy="397.4" r="2.15"/>
<circle cx="343.7" cy="485.9" r="2.15"/>
<circle cx="428.4" cy="295.9" r="2.15"/>
<circle cx="409.1" cy="407.9" r="2.15"/>
<circle cx="256.0" cy="459.5" r="2.15"/>
<circle cx="465.6" cy="296.5" r="2.15"/>
<circle cx="252.0" cy="513.4" r="2.15"/>
<circle cx="364.8" cy="438.4" r="2.15"/>
<circle cx="343.9" cy="332.6" r="2.15"/>
<circle cx="469.0" cy="365.2" r="2.15"/>
<circle cx="350.8" cy="341.2" r="2.15"/>
<circle cx="251.8" cy="374.0" r="2.15"/>
<circle cx="359.6" cy="335.7" r="2.15"/>
<circle cx="461.5" cy="428.8" r="2.15"/>
<circle cx="499.0" cy="301.9" r="2.15"/>
<circle cx="443.0" cy="373.2" r="2.15"/>
<circle cx="322.7" cy="480.8" r="2.15"/>
<circle cx="251.6" cy="445.5" r="2.15"/>
<circle cx="327.1" cy="346.7" r="2.15"/>
<circle cx="425.0" cy="407.8" r="2.15"/>
<circle cx="331.8" cy="440.8" r="2.15"/>
<circle cx="322.8" cy="319.2" r="2.15"/>
<circle cx="364.3" cy="336.4" r="2.15"/>
<circle cx="368.5" cy="309.1" r="2.15"/>
<circle cx="365.6" cy="430.8" r="2.15"/>
<circle cx="395.2" cy="305.9" r="2.15"/>
<circle cx="485.3" cy="367.4" r="2.15"/>
<circle cx="453.8" cy="365.3" r="2.15"/>
<circle cx="389.9" cy="457.4" r="2.15"/>
<circle cx="466.9" cy="315.8" r="2.15"/>
<circle cx="266.8" cy="365.1" r="2.15"/>
<circle cx="349.8" cy="330.8" r="2.15"/>
<circle cx="258.9" cy="411.6" r="2.15"/>
<circle cx="337.1" cy="459.4" r="2.15"/>
<circle cx="440.1" cy="281.9" r="2.15"/>
<circle cx="276.9" cy="447.9" r="2.15"/>
<circle cx="298.3" cy="343.7" r="2.15"/>
<circle cx="423.6" cy="417.9" r="2.15"/>
<circle cx="289.4" cy="354.6" r="2.15"/>
<circle cx="316.3" cy="467.8" r="2.15"/>
<circle cx="482.6" cy="296.2" r="2.15"/>
<circle cx="302.7" cy="402.2" r="2.15"/>
<circle cx="337.0" cy="373.8" r="2.15"/>
<circle cx="340.4" cy="311.8" r="2.15"/>
<circle cx="345.7" cy="297.3" r="2.15"/>
<circle cx="302.2" cy="350.3" r="2.15"/>
<circle cx="437.9" cy="391.9" r="2.15"/>
<circle cx="416.2" cy="418.3" r="2.15"/>
<circle cx="266.6" cy="373.5" r="2.15"/>
<circle cx="454.3" cy="339.9" r="2.15"/>
<circle cx="506.0" cy="343.2" r="2.15"/>
<circle cx="436.4" cy="422.2" r="2.15"/>
<circle cx="344.1" cy="315.4" r="2.15"/>
<circle cx="374.5" cy="458.5" r="2.15"/>
<circle cx="399.1" cy="398.6" r="2.15"/>
<circle cx="334.7" cy="405.4" r="2.15"/>
<circle cx="501.9" cy="303.5" r="2.15"/>
<circle cx="450.9" cy="370.5" r="2.15"/>
<circle cx="238.9" cy="363.5" r="2.15"/>
<circle cx="420.9" cy="413.5" r="2.15"/>
<circle cx="227.5" cy="368.8" r="2.15"/>
<circle cx="357.7" cy="337.0" r="2.15"/>
<circle cx="413.6" cy="443.3" r="2.15"/>
<circle cx="320.8" cy="525.9" r="2.15"/>
<circle cx="497.6" cy="359.7" r="2.15"/>
<circle cx="418.5" cy="447.6" r="2.15"/>
<circle cx="488.0" cy="311.5" r="2.15"/>
<circle cx="401.3" cy="407.9" r="2.15"/>
<circle cx="341.0" cy="490.6" r="2.15"/>
<circle cx="493.6" cy="381.4" r="2.15"/>
<circle cx="361.7" cy="466.8" r="2.15"/>
<circle cx="334.8" cy="337.9" r="2.15"/>
<circle cx="278.3" cy="354.1" r="2.15"/>
<circle cx="439.8" cy="371.7" r="2.15"/>
<circle cx="338.9" cy="309.5" r="2.15"/>
<circle cx="329.3" cy="441.9" r="2.15"/>
<circle cx="270.0" cy="372.6" r="2.15"/>
<circle cx="374.2" cy="306.1" r="2.15"/>
<circle cx="471.4" cy="416.6" r="2.15"/>
<circle cx="427.5" cy="314.9" r="2.15"/>
<circle cx="308.0" cy="378.0" r="2.15"/>
<circle cx="477.1" cy="371.8" r="2.15"/>
<circle cx="261.3" cy="380.4" r="2.15"/>
<circle cx="399.9" cy="445.9" r="2.15"/>
<circle cx="332.5" cy="454.8" r="2.15"/>
<circle cx="337.9" cy="367.0" r="2.15"/>
<circle cx="428.6" cy="347.9" r="2.15"/>
<circle cx="427.4" cy="320.0" r="2.15"/>
<circle cx="342.7" cy="468.7" r="2.15"/>
<circle cx="445.7" cy="403.2" r="2.15"/>
<circle cx="424.3" cy="376.4" r="2.15"/>
<circle cx="386.3" cy="450.4" r="2.15"/>
<circle cx="399.6" cy="474.5" r="2.15"/>
<circle cx="459.0" cy="288.5" r="2.15"/>
<circle cx="428.8" cy="311.5" r="2.15"/>
<circle cx="502.3" cy="372.0" r="2.15"/>
<circle cx="392.7" cy="463.5" r="2.15"/>
<circle cx="333.4" cy="322.4" r="2.15"/>
<circle cx="224.1" cy="465.9" r="2.15"/>
<circle cx="240.7" cy="373.3" r="2.15"/>
<circle cx="443.7" cy="435.8" r="2.15"/>
<circle cx="415.7" cy="307.5" r="2.15"/>
<circle cx="277.1" cy="445.6" r="2.15"/>
<circle cx="452.0" cy="398.9" r="2.15"/>
<circle cx="245.3" cy="414.7" r="2.15"/>
<circle cx="367.1" cy="473.9" r="2.15"/>
<circle cx="376.8" cy="367.2" r="2.15"/>
<circle cx="443.1" cy="414.8" r="2.15"/>
<circle cx="311.5" cy="542.0" r="2.15"/>
<circle cx="241.8" cy="496.0" r="3.5"/>
<circle cx="470.3" cy="387.6" r="2.15"/>
<circle cx="366.8" cy="334.4" r="2.15"/>
<circle cx="432.3" cy="296.6" r="2.15"/>
<circle cx="409.2" cy="375.5" r="2.15"/>
<circle cx="359.5" cy="514.2" r="2.15"/>
<circle cx="426.0" cy="334.0" r="4"/>
<circle cx="226.8" cy="368.5" r="2.15"/>
<circle cx="436.1" cy="378.9" r="2.15"/>
<circle cx="483.0" cy="361.9" r="2.15"/>
<circle cx="496.2" cy="389.3" r="2.15"/>
<circle cx="366.9" cy="465.6" r="2.15"/>
<circle cx="443.9" cy="380.3" r="2.15"/>
<circle cx="285.8" cy="413.7" r="2.15"/>
<circle cx="259.3" cy="372.6" r="2.15"/>
<circle cx="281.9" cy="360.6" r="2.15"/>
<circle cx="440.4" cy="373.9" r="2.15"/>
<circle cx="422.9" cy="406.2" r="2.15"/>
<circle cx="278.8" cy="393.6" r="2.15"/>
<circle cx="317.3" cy="474.3" r="2.15"/>
<circle cx="437.4" cy="374.2" r="2.15"/>
<circle cx="354.6" cy="467.9" r="2.15"/>
<circle cx="343.2" cy="388.0" r="2.15"/>
<circle cx="282.3" cy="517.8" r="2.15"/>
<circle cx="380.6" cy="457.9" r="2.15"/>
<circle cx="399.8" cy="404.6" r="2.15"/>
<circle cx="478.5" cy="407.5" r="2.15"/>
<circle cx="342.8" cy="315.4" r="2.15"/>
<circle cx="483.0" cy="310.0" r="2.15"/>
<circle cx="451.3" cy="439.8" r="2.15"/>
<circle cx="317.8" cy="473.6" r="2.15"/>
<circle cx="409.7" cy="402.5" r="2.15"/>
<circle cx="332.2" cy="342.2" r="2.15"/>
<circle cx="258.0" cy="381.1" r="2.15"/>
<circle cx="221.9" cy="383.6" r="2.15"/>
<circle cx="435.5" cy="426.4" r="2.15"/>
<circle cx="341.1" cy="471.3" r="2.15"/>
<circle cx="241.7" cy="439.3" r="2.15"/>
<circle cx="403.7" cy="423.2" r="2.15"/>
<circle cx="485.8" cy="301.7" r="2.15"/>
<circle cx="468.5" cy="302.7" r="2.15"/>
<circle cx="421.3" cy="416.9" r="2.15"/>
<circle cx="328.0" cy="321.2" r="2.15"/>
<circle cx="439.5" cy="310.4" r="2.15"/>
<circle cx="292.6" cy="353.9" r="2.15"/>
<circle cx="339.4" cy="481.8" r="2.15"/>
<circle cx="327.3" cy="334.6" r="2.15"/>
<circle cx="273.5" cy="366.4" r="2.15"/>
<circle cx="341.0" cy="328.5" r="2.15"/>
<circle cx="415.6" cy="324.6" r="2.15"/>
<circle cx="364.4" cy="304.3" r="2.15"/>
<circle cx="310.3" cy="463.3" r="2.15"/>
<circle cx="253.8" cy="415.7" r="2.15"/>
<circle cx="376.8" cy="341.3" r="2.15"/>
<circle cx="401.2" cy="399.4" r="2.15"/>
<circle cx="486.6" cy="372.5" r="2.15"/>
<circle cx="409.5" cy="376.4" r="2.15"/>
<circle cx="347.3" cy="299.5" r="2.15"/>
<circle cx="473.4" cy="316.5" r="2.15"/>
<circle cx="315.5" cy="477.3" r="2.15"/>
<circle cx="343.7" cy="291.7" r="2.15"/>
<circle cx="326.7" cy="475.7" r="2.15"/>
<circle cx="438.9" cy="377.6" r="2.15"/>
<circle cx="302.7" cy="492.4" r="2.15"/>
<circle cx="287.5" cy="374.9" r="2.15"/>
<circle cx="447.4" cy="295.9" r="2.15"/>
<circle cx="422.1" cy="400.0" r="2.15"/>
<circle cx="315.6" cy="469.0" r="2.15"/>
<circle cx="344.1" cy="547.2" r="2.15"/>
<circle cx="466.6" cy="365.0" r="2.15"/>
<circle cx="377.9" cy="474.0" r="2.15"/>
<circle cx="403.6" cy="440.0" r="2.15"/>
<circle cx="276.9" cy="364.1" r="2.15"/>
<circle cx="423.8" cy="413.1" r="2.15"/>
<circle cx="448.0" cy="389.4" r="2.15"/>
<circle cx="391.9" cy="295.5" r="2.15"/>
<circle cx="475.1" cy="411.2" r="2.15"/>
<circle cx="437.0" cy="381.0" r="15.7"/>
<circle cx="218.6" cy="381.1" r="2.15"/>
<circle cx="273.3" cy="482.8" r="2.15"/>
<circle cx="503.2" cy="389.6" r="2.15"/>
<circle cx="220.9" cy="474.9" r="2.15"/>
<circle cx="415.0" cy="315.5" r="2.15"/>
<circle cx="328.0" cy="305.4" r="2.15"/>
<circle cx="326.3" cy="315.6" r="2.15"/>
<circle cx="467.4" cy="366.5" r="2.15"/>
<circle cx="413.0" cy="445.3" r="2.15"/>
<circle cx="368.7" cy="466.6" r="2.15"/>
<circle cx="498.5" cy="347.8" r="2.15"/>
<circle cx="338.6" cy="485.9" r="2.15"/>
<circle cx="280.4" cy="357.0" r="2.15"/>
<circle cx="259.4" cy="380.2" r="2.15"/>
<circle cx="419.0" cy="451.5" r="2.15"/>
<circle cx="348.1" cy="393.0" r="2.15"/>
<circle cx="269.8" cy="441.9" r="2.15"/>
<circle cx="372.7" cy="316.9" r="2.15"/>
<circle cx="376.8" cy="460.9" r="2.15"/>
<circle cx="342.2" cy="436.2" r="2.15"/>
<circle cx="418.9" cy="381.9" r="2.15"/>
<circle cx="470.4" cy="289.2" r="2.15"/>
<circle cx="305.4" cy="445.3" r="2.15"/>
<circle cx="336.4" cy="336.4" r="2.15"/>
<circle cx="323.2" cy="467.7" r="2.15"/>
<circle cx="443.5" cy="295.3" r="2.15"/>
<circle cx="449.2" cy="378.4" r="2.15"/>
<circle cx="426.1" cy="413.4" r="2.15"/>
<circle cx="451.3" cy="436.9" r="2.15"/>
<circle cx="376.0" cy="456.8" r="2.15"/>
<circle cx="449.8" cy="379.9" r="2.15"/>
<circle cx="448.7" cy="412.3" r="2.15"/>
<circle cx="331.6" cy="384.0" r="2.15"/>
<circle cx="420.8" cy="313.2" r="2.15"/>
<circle cx="468.5" cy="389.5" r="2.15"/>
<circle cx="444.9" cy="411.7" r="2.15"/>
<circle cx="447.1" cy="421.1" r="2.15"/>
<circle cx="354.7" cy="412.3" r="2.15"/>
<circle cx="475.1" cy="392.4" r="2.15"/>
<circle cx="223.4" cy="469.7" r="2.15"/>
<circle cx="500.0" cy="377.1" r="2.15"/>
<circle cx="344.1" cy="489.9" r="2.15"/>
<circle cx="484.3" cy="380.6" r="2.15"/>
<circle cx="432.7" cy="402.7" r="2.15"/>
<circle cx="224.1" cy="427.7" r="2.15"/>
<circle cx="416.6" cy="415.1" r="2.15"/>
<circle cx="362.5" cy="455.4" r="2.15"/>
<circle cx="223.3" cy="352.8" r="2.15"/>
<circle cx="439.0" cy="365.9" r="2.15"/>
<circle cx="372.5" cy="335.8" r="2.15"/>
<circle cx="491.4" cy="295.4" r="2.15"/>
<circle cx="429.9" cy="376.2" r="2.15"/>
<circle cx="347.6" cy="411.0" r="2.15"/>
<circle cx="399.3" cy="458.7" r="2.15"/>
<circle cx="302.7" cy="472.4" r="2.15"/>
<circle cx="452.5" cy="378.9" r="2.15"/>
<circle cx="438.9" cy="373.3" r="2.15"/>
<circle cx="441.2" cy="407.8" r="2.15"/>
<circle cx="371.9" cy="340.7" r="2.15"/>
<circle cx="321.2" cy="331.0" r="2.15"/>
<circle cx="464.4" cy="336.5" r="2.15"/>
<circle cx="445.5" cy="294.1" r="2.15"/>
<circle cx="492.3" cy="283.0" r="2.15"/>
<circle cx="351.0" cy="319.8" r="2.15"/>
<circle cx="472.9" cy="385.9" r="2.15"/>
<circle cx="222.9" cy="394.1" r="2.15"/>
<circle cx="315.7" cy="495.1" r="2.15"/>
<circle cx="374.5" cy="390.7" r="2.15"/>
<circle cx="227.9" cy="371.6" r="2.15"/>
<circle cx="424.1" cy="397.8" r="2.15"/>
<circle cx="391.1" cy="321.0" r="2.15"/>
<circle cx="257.7" cy="371.2" r="2.15"/>
<circle cx="330.7" cy="307.8" r="2.15"/>
<circle cx="405.4" cy="444.6" r="2.15"/>
<circle cx="373.5" cy="469.2" r="2.15"/>
<circle cx="424.2" cy="399.5" r="2.15"/>
<circle cx="254.9" cy="374.6" r="2.15"/>
<circle cx="457.6" cy="372.6" r="2.15"/>
<circle cx="412.3" cy="413.6" r="2.15"/>
<circle cx="400.9" cy="445.2" r="2.15"/>
<circle cx="380.8" cy="412.2" r="2.15"/>
<circle cx="362.9" cy="321.4" r="2.15"/>
<circle cx="482.7" cy="353.8" r="2.15"/>
<circle cx="493.8" cy="283.1" r="2.15"/>
<circle cx="438.9" cy="378.6" r="2.15"/>
<circle cx="382.9" cy="458.2" r="2.15"/>
<circle cx="482.3" cy="308.5" r="2.15"/>
<circle cx="346.1" cy="294.5" r="2.15"/>
<circle cx="381.1" cy="313.0" r="2.15"/>
<circle cx="496.8" cy="268.2" r="2.15"/>
<circle cx="227.3" cy="403.0" r="2.15"/>
<circle cx="421.7" cy="304.7" r="2.15"/>
<circle cx="301.7" cy="345.1" r="2.15"/>
<circle cx="449.8" cy="412.5" r="2.15"/>
<circle cx="388.7" cy="471.4" r="2.15"/>
<circle cx="389.7" cy="303.5" r="2.15"/>
<circle cx="297.1" cy="343.5" r="2.15"/>
<circle cx="441.5" cy="300.4" r="2.15"/>
<circle cx="380.3" cy="302.8" r="2.15"/>
<circle cx="424.8" cy="292.6" r="2.15"/>
<circle cx="330.9" cy="325.5" r="2.15"/>
<circle cx="443.0" cy="437.9" r="2.15"/>
<circle cx="397.3" cy="438.2" r="2.15"/>
<circle cx="362.1" cy="436.7" r="2.15"/>
<circle cx="471.2" cy="416.6" r="2.15"/>
<circle cx="352.7" cy="338.2" r="2.15"/>
<circle cx="222.2" cy="375.8" r="2.15"/>
<circle cx="400.6" cy="411.1" r="2.15"/>
<circle cx="409.9" cy="394.9" r="2.15"/>
<circle cx="431.4" cy="420.2" r="2.15"/>
<circle cx="279.7" cy="443.2" r="2.15"/>
<circle cx="386.6" cy="318.5" r="2.15"/>
<circle cx="333.5" cy="361.8" r="2.15"/>
<circle cx="506.0" cy="313.4" r="2.15"/>
<circle cx="351.7" cy="483.3" r="2.15"/>
<circle cx="220.2" cy="384.1" r="2.15"/>
<circle cx="321.9" cy="475.7" r="2.15"/>
<circle cx="355.3" cy="331.6" r="2.15"/>
<circle cx="404.0" cy="418.0" r="2.15"/>
<circle cx="467.5" cy="386.6" r="2.15"/>
<circle cx="222.0" cy="372.4" r="2.15"/>
<circle cx="480.0" cy="349.8" r="2.15"/>
<circle cx="437.7" cy="325.2" r="2.15"/>
<circle cx="315.9" cy="472.4" r="2.15"/>
<circle cx="288.0" cy="391.6" r="2.15"/>
<circle cx="355.8" cy="432.8" r="2.15"/>
<circle cx="409.3" cy="457.5" r="2.15"/>
<circle cx="487.6" cy="290.0" r="2.15"/>
<circle cx="280.5" cy="466.7" r="2.15"/>
<circle cx="407.0" cy="414.2" r="2.15"/>
<circle cx="267.4" cy="474.1" r="2.15"/>
<circle cx="491.2" cy="302.8" r="2.15"/>
<circle cx="478.5" cy="406.6" r="2.15"/>
<circle cx="371.4" cy="443.0" r="2.15"/>
<circle cx="471.2" cy="283.9" r="2.15"/>
<circle cx="471.3" cy="374.7" r="2.15"/>
<circle cx="349.5" cy="410.1" r="2.15"/>
<circle cx="219.0" cy="378.3" r="2.15"/>
<circle cx="339.1" cy="450.4" r="2.15"/>
<circle cx="317.1" cy="473.8" r="2.15"/>
<circle cx="452.3" cy="399.8" r="2.15"/>
<circle cx="461.5" cy="378.1" r="2.3"/>
<circle cx="454.5" cy="364.9" r="2.3"/>
<circle cx="447.8" cy="384.1" r="2.3"/>
<circle cx="456.1" cy="394.9" r="2.3"/>
<circle cx="457.1" cy="362.4" r="2.3"/>
<circle cx="446.0" cy="396.1" r="2.3"/>
<circle cx="441.7" cy="384.5" r="2.3"/>
<circle cx="452.0" cy="394.5" r="2.3"/>
<circle cx="442.1" cy="374.5" r="2.3"/>
<circle cx="466.4" cy="394.8" r="2.3"/>
<circle cx="440.6" cy="377.3" r="2.3"/>
<circle cx="462.0" cy="387.7" r="2.3"/>
<circle cx="454.6" cy="374.7" r="2.3"/>
<circle cx="442.3" cy="391.5" r="2.3"/>
<circle cx="450.9" cy="387.6" r="2.3"/>
<circle cx="447.4" cy="366.7" r="2.3"/>
<circle cx="449.0" cy="380.7" r="2.3"/>
<circle cx="444.5" cy="386.2" r="2.3"/>
<circle cx="447.9" cy="369.1" r="2.3"/>
<circle cx="448.2" cy="356.7" r="2.3"/>
<circle cx="463.4" cy="385.0" r="2.3"/>
<circle cx="451.1" cy="384.9" r="2.3"/>
<circle cx="451.6" cy="388.7" r="2.3"/>
<circle cx="457.2" cy="388.1" r="2.3"/>
<circle cx="459.8" cy="376.7" r="2.3"/>
<circle cx="452.6" cy="388.5" r="2.3"/>
<circle cx="458.5" cy="388.9" r="2.3"/>
<circle cx="456.9" cy="388.3" r="2.3"/>
<circle cx="466.0" cy="381.3" r="2.3"/>
<circle cx="453.9" cy="372.3" r="2.3"/>
<circle cx="455.2" cy="389.4" r="2.3"/>
<circle cx="445.0" cy="385.6" r="2.3"/>
<circle cx="450.8" cy="378.3" r="2.3"/>
<circle cx="445.5" cy="378.1" r="2.3"/>
<circle cx="456.0" cy="385.0" r="2.3"/>
<circle cx="455.3" cy="365.1" r="2.3"/>
<circle cx="459.8" cy="388.8" r="2.3"/>
<circle cx="438.0" cy="394.9" r="2.3"/>
<circle cx="449.7" cy="385.4" r="2.3"/>
<circle cx="456.6" cy="374.1" r="2.3"/>
</g>
</g></svg>
<div class="a" style="left:527px;top:538px;width:185px;height:20px;background:rgba(243,243,241,0.7)"></div>
<div class="t" style="left:529.00px;top:539.00px;font:normal normal 12.5px 'Liberation Sans', sans-serif;line-height:14.37px;color:#404040;transform:scaleX(1.0429);transform-origin:0 0;">© OpenStreetMap contributors</div>
<div class="a" style="left:542px;top:551px;width:164px;height:1px;background:#595959"></div>
<div class="a" style="left:645.5px;top:209.5px;width:60.5px;height:34.5px;border-radius:4px;background:rgba(255,255,255,0.55);box-shadow:0 1px 3px rgba(0,0,0,0.05)"></div>
<svg style="left:0;top:0" width="720" height="300">
<path d="M665.5 225 L671.5 219 M667.5 219 H671.5 V223 M661 229.5 L655 235.5 M655 231.5 V235.5 H659" fill="none" stroke="#d6d6d6" stroke-width="1"/>
<circle cx="684" cy="227" r="1.4" fill="#dadada"/><circle cx="689.5" cy="227" r="1.4" fill="#dadada"/><circle cx="695" cy="227" r="1.4" fill="#dadada"/>
</svg>
<div class="a" style="left:868px;top:508px;width:361px;height:10px;background:linear-gradient(180deg,rgba(0,0,0,0),rgba(0,0,0,0.035))"></div>
<div class="a" style="left:868px;top:835px;width:361px;height:10px;background:linear-gradient(180deg,rgba(0,0,0,0),rgba(0,0,0,0.035))"></div>
</body></html>
